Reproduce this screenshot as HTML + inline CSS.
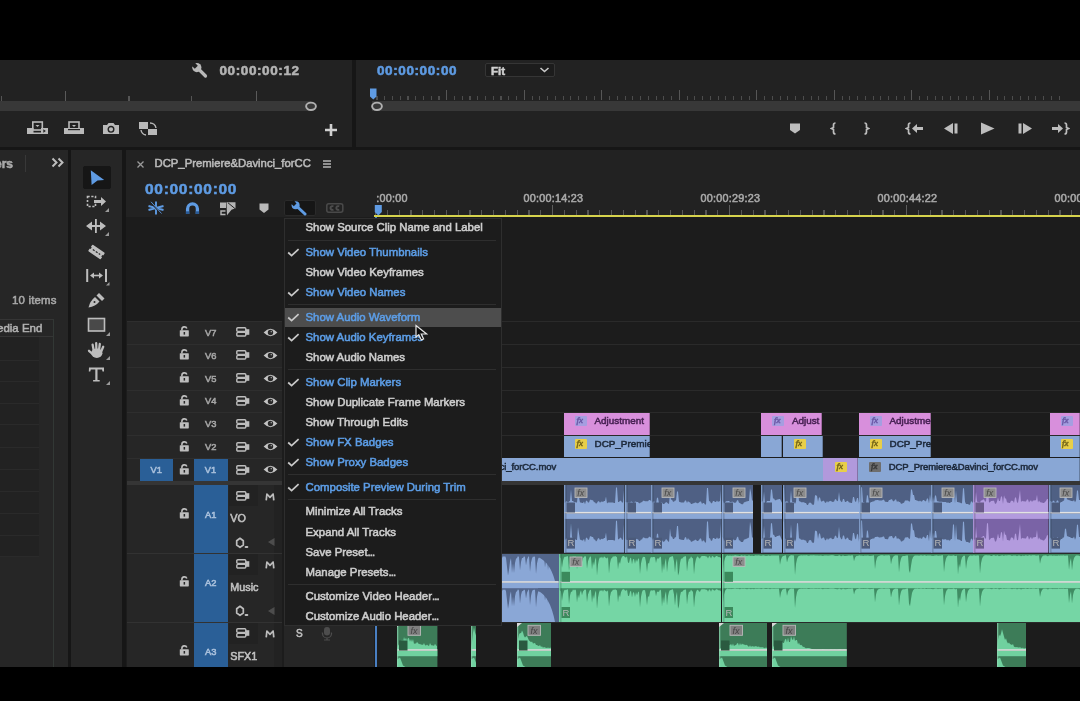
<!DOCTYPE html>
<html><head><meta charset="utf-8"><style>
html,body{margin:0;padding:0;}
body{width:1080px;height:701px;background:#000;position:relative;overflow:hidden;font-family:"Liberation Sans",sans-serif;}
body div, body span, body svg{position:absolute;}
.t{white-space:nowrap;-webkit-text-stroke:0.55px currentColor;}
.t span{position:static;}
svg text{font-family:"Liberation Sans",sans-serif;}
</style></head><body>
<svg width="0" height="0" style="left:0;top:0"><filter id="soft" x="0" y="0" width="100%" height="100%"><feGaussianBlur stdDeviation="0.5"/></filter></svg>
<div id="wrap" style="left:0;top:0;width:1080px;height:701px;filter:url(#soft)">
<div style="left:0px;top:60px;width:1080px;height:90px;background:#232323;"></div>
<div style="left:352.3px;top:60px;width:3.4px;height:90px;background:#171717;"></div>
<div style="left:0px;top:146.8px;width:1080px;height:3.6px;background:#171717;"></div>
<svg style="left:191px;top:62px;" width="17" height="17" viewBox="0 0 17 17"><path d="M7.5 7 L14.5 14" stroke="#b9b9b9" stroke-width="3.2" stroke-linecap="round"/><circle cx="5.8" cy="5.6" r="4.6" fill="#b9b9b9"/><path d="M0 3.2 L3.2 0 L6.8 3.8 L3.8 6.8z" fill="#232323"/></svg>
<span class="t" style="left:219.5px;top:64.17px;font-size:13.5px;line-height:13.5px;color:#b4b4b4;font-weight:700;letter-spacing:0.6px">00:00:00:12</span>
<div style="left:1.0px;top:96px;width:1.2px;height:5px;background:#555;"></div>
<div style="left:65.2px;top:91px;width:1.2px;height:10px;background:#5a5a5a;"></div>
<div style="left:128.4px;top:96px;width:1.2px;height:5px;background:#555;"></div>
<div style="left:191.0px;top:96px;width:1.2px;height:5px;background:#555;"></div>
<div style="left:255.5px;top:91px;width:1.2px;height:10px;background:#5a5a5a;"></div>
<div style="left:0px;top:101px;width:311px;height:10px;background:#393939;"></div>
<svg style="left:304px;top:99px;" width="14" height="14" viewBox="0 0 14 14"><ellipse cx="7" cy="7.3" rx="4.9" ry="3.7" fill="#393939" stroke="#b0b0b0" stroke-width="1.9"/></svg>
<svg style="left:26px;top:121px;" width="23" height="14" viewBox="0 0 23 14"><rect x="6.8" y="1" width="9.5" height="8" fill="none" stroke="#b9b9b9" stroke-width="1.6"/><path d="M9.5 4 h4 l-2 2z" fill="#b9b9b9"/><rect x="1" y="7" width="6.5" height="6" fill="#b9b9b9"/><rect x="6" y="11.5" width="9" height="1.5" fill="#b9b9b9"/><rect x="15" y="7" width="7" height="6" fill="#b9b9b9"/><path d="M17.3 8.3 v3.5 l2.6 -1.75z" fill="#232323"/></svg>
<svg style="left:63px;top:121px;" width="22" height="14" viewBox="0 0 22 14"><rect x="6" y="1" width="10" height="8" fill="none" stroke="#b9b9b9" stroke-width="1.6"/><path d="M9 4 h4 l-2 2z" fill="#b9b9b9"/><rect x="1" y="7" width="20" height="6" fill="#b9b9b9"/><rect x="5" y="8" width="12" height="1.2" fill="#232323"/></svg>
<svg style="left:102px;top:122px;" width="18" height="13" viewBox="0 0 18 13"><path d="M1 3 h4 l1.5 -2 h5 l1.5 2 h4 v9 h-16z" fill="#b9b9b9"/><circle cx="9" cy="7.3" r="2.8" fill="none" stroke="#232323" stroke-width="1.4"/></svg>
<svg style="left:138px;top:121px;" width="20" height="16" viewBox="0 0 20 16"><rect x="1" y="1" width="9" height="7" fill="#b9b9b9"/><rect x="10" y="8" width="9" height="6" fill="#b9b9b9"/><path d="M12 2 a6 6 0 0 1 6 5" fill="none" stroke="#b9b9b9" stroke-width="1.4"/><path d="M8 14 a6 6 0 0 1 -5 -5" fill="none" stroke="#b9b9b9" stroke-width="1.4"/><rect x="1" y="8" width="9" height="6" fill="none" stroke="#b9b9b9" stroke-width="0" /></svg>
<svg style="left:324px;top:123px;" width="14" height="14" viewBox="0 0 14 14"><path d="M7 1 v12 M1 7 h12" stroke="#d0d0d0" stroke-width="2.6"/></svg>
<span class="t" style="left:377px;top:64.17px;font-size:13.5px;line-height:13.5px;color:#5e9be3;font-weight:700;letter-spacing:0.6px">00:00:00:00</span>
<div style="left:485px;top:62.5px;width:70px;height:14.5px;background:#1b1b1b;border:1px solid #343434;box-sizing:border-box;border-radius:2px"></div>
<span class="t" style="left:491px;top:65.77px;font-size:11.5px;line-height:11.5px;color:#cfcfcf;font-weight:700;">Fit</span>
<svg style="left:539px;top:66px;" width="11" height="8" viewBox="0 0 11 8"><path d="M1.5 2 L5.5 5.5 L9.5 2" fill="none" stroke="#c8c8c8" stroke-width="1.6"/></svg>
<div style="left:376.4px;top:95.5px;width:1.2px;height:4.5px;background:#4e4e4e;"></div>
<div style="left:384.2px;top:95.5px;width:1.2px;height:4.5px;background:#4e4e4e;"></div>
<div style="left:391.9px;top:95.5px;width:1.2px;height:4.5px;background:#4e4e4e;"></div>
<div style="left:399.7px;top:95.5px;width:1.2px;height:4.5px;background:#4e4e4e;"></div>
<div style="left:407.4px;top:95.5px;width:1.2px;height:4.5px;background:#4e4e4e;"></div>
<div style="left:415.2px;top:95.5px;width:1.2px;height:4.5px;background:#4e4e4e;"></div>
<div style="left:422.9px;top:95.5px;width:1.2px;height:4.5px;background:#4e4e4e;"></div>
<div style="left:430.7px;top:95.5px;width:1.2px;height:4.5px;background:#4e4e4e;"></div>
<div style="left:438.4px;top:95.5px;width:1.2px;height:4.5px;background:#4e4e4e;"></div>
<div style="left:446.2px;top:90px;width:1.2px;height:10px;background:#565656;"></div>
<div style="left:453.9px;top:95.5px;width:1.2px;height:4.5px;background:#4e4e4e;"></div>
<div style="left:461.7px;top:95.5px;width:1.2px;height:4.5px;background:#4e4e4e;"></div>
<div style="left:469.4px;top:95.5px;width:1.2px;height:4.5px;background:#4e4e4e;"></div>
<div style="left:477.2px;top:95.5px;width:1.2px;height:4.5px;background:#4e4e4e;"></div>
<div style="left:484.9px;top:95.5px;width:1.2px;height:4.5px;background:#4e4e4e;"></div>
<div style="left:492.7px;top:95.5px;width:1.2px;height:4.5px;background:#4e4e4e;"></div>
<div style="left:500.4px;top:95.5px;width:1.2px;height:4.5px;background:#4e4e4e;"></div>
<div style="left:508.2px;top:95.5px;width:1.2px;height:4.5px;background:#4e4e4e;"></div>
<div style="left:516.0px;top:95.5px;width:1.2px;height:4.5px;background:#4e4e4e;"></div>
<div style="left:523.7px;top:90px;width:1.2px;height:10px;background:#565656;"></div>
<div style="left:531.5px;top:95.5px;width:1.2px;height:4.5px;background:#4e4e4e;"></div>
<div style="left:539.2px;top:95.5px;width:1.2px;height:4.5px;background:#4e4e4e;"></div>
<div style="left:547.0px;top:95.5px;width:1.2px;height:4.5px;background:#4e4e4e;"></div>
<div style="left:554.7px;top:95.5px;width:1.2px;height:4.5px;background:#4e4e4e;"></div>
<div style="left:562.5px;top:95.5px;width:1.2px;height:4.5px;background:#4e4e4e;"></div>
<div style="left:570.2px;top:95.5px;width:1.2px;height:4.5px;background:#4e4e4e;"></div>
<div style="left:578.0px;top:95.5px;width:1.2px;height:4.5px;background:#4e4e4e;"></div>
<div style="left:585.7px;top:95.5px;width:1.2px;height:4.5px;background:#4e4e4e;"></div>
<div style="left:593.5px;top:95.5px;width:1.2px;height:4.5px;background:#4e4e4e;"></div>
<div style="left:601.2px;top:90px;width:1.2px;height:10px;background:#565656;"></div>
<div style="left:609.0px;top:95.5px;width:1.2px;height:4.5px;background:#4e4e4e;"></div>
<div style="left:616.7px;top:95.5px;width:1.2px;height:4.5px;background:#4e4e4e;"></div>
<div style="left:624.5px;top:95.5px;width:1.2px;height:4.5px;background:#4e4e4e;"></div>
<div style="left:632.2px;top:95.5px;width:1.2px;height:4.5px;background:#4e4e4e;"></div>
<div style="left:640.0px;top:95.5px;width:1.2px;height:4.5px;background:#4e4e4e;"></div>
<div style="left:647.7px;top:95.5px;width:1.2px;height:4.5px;background:#4e4e4e;"></div>
<div style="left:655.5px;top:95.5px;width:1.2px;height:4.5px;background:#4e4e4e;"></div>
<div style="left:663.2px;top:95.5px;width:1.2px;height:4.5px;background:#4e4e4e;"></div>
<div style="left:671.0px;top:95.5px;width:1.2px;height:4.5px;background:#4e4e4e;"></div>
<div style="left:678.7px;top:90px;width:1.2px;height:10px;background:#565656;"></div>
<div style="left:686.5px;top:95.5px;width:1.2px;height:4.5px;background:#4e4e4e;"></div>
<div style="left:694.2px;top:95.5px;width:1.2px;height:4.5px;background:#4e4e4e;"></div>
<div style="left:702.0px;top:95.5px;width:1.2px;height:4.5px;background:#4e4e4e;"></div>
<div style="left:709.7px;top:95.5px;width:1.2px;height:4.5px;background:#4e4e4e;"></div>
<div style="left:717.5px;top:95.5px;width:1.2px;height:4.5px;background:#4e4e4e;"></div>
<div style="left:725.2px;top:95.5px;width:1.2px;height:4.5px;background:#4e4e4e;"></div>
<div style="left:733.0px;top:95.5px;width:1.2px;height:4.5px;background:#4e4e4e;"></div>
<div style="left:740.7px;top:95.5px;width:1.2px;height:4.5px;background:#4e4e4e;"></div>
<div style="left:748.5px;top:95.5px;width:1.2px;height:4.5px;background:#4e4e4e;"></div>
<div style="left:756.2px;top:90px;width:1.2px;height:10px;background:#565656;"></div>
<div style="left:764.0px;top:95.5px;width:1.2px;height:4.5px;background:#4e4e4e;"></div>
<div style="left:771.7px;top:95.5px;width:1.2px;height:4.5px;background:#4e4e4e;"></div>
<div style="left:779.5px;top:95.5px;width:1.2px;height:4.5px;background:#4e4e4e;"></div>
<div style="left:787.2px;top:95.5px;width:1.2px;height:4.5px;background:#4e4e4e;"></div>
<div style="left:795.0px;top:95.5px;width:1.2px;height:4.5px;background:#4e4e4e;"></div>
<div style="left:802.7px;top:95.5px;width:1.2px;height:4.5px;background:#4e4e4e;"></div>
<div style="left:810.5px;top:95.5px;width:1.2px;height:4.5px;background:#4e4e4e;"></div>
<div style="left:818.2px;top:95.5px;width:1.2px;height:4.5px;background:#4e4e4e;"></div>
<div style="left:826.0px;top:95.5px;width:1.2px;height:4.5px;background:#4e4e4e;"></div>
<div style="left:833.7px;top:90px;width:1.2px;height:10px;background:#565656;"></div>
<div style="left:841.5px;top:95.5px;width:1.2px;height:4.5px;background:#4e4e4e;"></div>
<div style="left:849.2px;top:95.5px;width:1.2px;height:4.5px;background:#4e4e4e;"></div>
<div style="left:857.0px;top:95.5px;width:1.2px;height:4.5px;background:#4e4e4e;"></div>
<div style="left:864.7px;top:95.5px;width:1.2px;height:4.5px;background:#4e4e4e;"></div>
<div style="left:872.5px;top:95.5px;width:1.2px;height:4.5px;background:#4e4e4e;"></div>
<div style="left:880.2px;top:95.5px;width:1.2px;height:4.5px;background:#4e4e4e;"></div>
<div style="left:888.0px;top:95.5px;width:1.2px;height:4.5px;background:#4e4e4e;"></div>
<div style="left:895.7px;top:95.5px;width:1.2px;height:4.5px;background:#4e4e4e;"></div>
<div style="left:903.5px;top:95.5px;width:1.2px;height:4.5px;background:#4e4e4e;"></div>
<div style="left:911.2px;top:90px;width:1.2px;height:10px;background:#565656;"></div>
<div style="left:919.0px;top:95.5px;width:1.2px;height:4.5px;background:#4e4e4e;"></div>
<div style="left:926.7px;top:95.5px;width:1.2px;height:4.5px;background:#4e4e4e;"></div>
<div style="left:934.5px;top:95.5px;width:1.2px;height:4.5px;background:#4e4e4e;"></div>
<div style="left:942.2px;top:95.5px;width:1.2px;height:4.5px;background:#4e4e4e;"></div>
<div style="left:950.0px;top:95.5px;width:1.2px;height:4.5px;background:#4e4e4e;"></div>
<div style="left:957.7px;top:95.5px;width:1.2px;height:4.5px;background:#4e4e4e;"></div>
<div style="left:965.5px;top:95.5px;width:1.2px;height:4.5px;background:#4e4e4e;"></div>
<div style="left:973.2px;top:95.5px;width:1.2px;height:4.5px;background:#4e4e4e;"></div>
<div style="left:981.0px;top:95.5px;width:1.2px;height:4.5px;background:#4e4e4e;"></div>
<div style="left:988.7px;top:90px;width:1.2px;height:10px;background:#565656;"></div>
<div style="left:996.5px;top:95.5px;width:1.2px;height:4.5px;background:#4e4e4e;"></div>
<div style="left:1004.2px;top:95.5px;width:1.2px;height:4.5px;background:#4e4e4e;"></div>
<div style="left:1012.0px;top:95.5px;width:1.2px;height:4.5px;background:#4e4e4e;"></div>
<div style="left:1019.7px;top:95.5px;width:1.2px;height:4.5px;background:#4e4e4e;"></div>
<div style="left:1027.5px;top:95.5px;width:1.2px;height:4.5px;background:#4e4e4e;"></div>
<div style="left:1035.2px;top:95.5px;width:1.2px;height:4.5px;background:#4e4e4e;"></div>
<div style="left:1043.0px;top:95.5px;width:1.2px;height:4.5px;background:#4e4e4e;"></div>
<div style="left:1050.7px;top:95.5px;width:1.2px;height:4.5px;background:#4e4e4e;"></div>
<div style="left:1058.5px;top:95.5px;width:1.2px;height:4.5px;background:#4e4e4e;"></div>
<div style="left:372px;top:101px;width:708px;height:10px;background:#393939;"></div>
<svg style="left:370px;top:99px;" width="14" height="14" viewBox="0 0 14 14"><ellipse cx="7" cy="7.3" rx="4.9" ry="3.7" fill="#393939" stroke="#b0b0b0" stroke-width="1.9"/></svg>
<svg style="left:369px;top:87px;" width="9" height="13" viewBox="0 0 9 13"><path d="M1 1.5 h6.5 v8 l-3.2 3 l-3.3 -3z" fill="#5e9be3"/></svg>
<svg style="left:789px;top:123px;" width="12" height="11" viewBox="0 0 12 11"><path d="M1 0.5 h10 v6.5 l-5 3.5 l-5 -3.5z" fill="#bdbdbd"/></svg>
<svg style="left:830px;top:122px;" width="7" height="13" viewBox="0 0 7 13"><path d="M5.5 1 q-2 0 -2 2 v2.5 l-2 1 l2 1 v2.5 q0 2 2 2" fill="none" stroke="#bdbdbd" stroke-width="1.7"/></svg>
<svg style="left:863px;top:122px;" width="7" height="13" viewBox="0 0 7 13"><path d="M1.5 1 q2 0 2 2 v2.5 l2 1 l-2 1 v2.5 q0 2 -2 2" fill="none" stroke="#bdbdbd" stroke-width="1.7"/></svg>
<svg style="left:905px;top:122px;" width="19" height="13" viewBox="0 0 19 13"><path d="M5.5 1 q-2 0 -2 2 v2.5 l-2 1 l2 1 v2.5 q0 2 2 2" fill="none" stroke="#bdbdbd" stroke-width="1.7"/><path d="M7 6.5 l5 -4.5 v3 h6 v3 h-6 v3z" fill="#bdbdbd"/></svg>
<svg style="left:943px;top:122px;" width="16" height="13" viewBox="0 0 16 13"><path d="M1 6.5 l9 -5.5 v11z" fill="#bdbdbd"/><rect x="11.5" y="1.5" width="3" height="10" fill="#bdbdbd"/></svg>
<svg style="left:980px;top:122px;" width="15" height="13" viewBox="0 0 15 13"><path d="M1 0.5 l13.5 6 l-13.5 6z" fill="#bdbdbd"/></svg>
<svg style="left:1017px;top:122px;" width="16" height="13" viewBox="0 0 16 13"><rect x="1.5" y="1.5" width="3" height="10" fill="#bdbdbd"/><path d="M6 1 l9 5.5 l-9 5.5z" fill="#bdbdbd"/></svg>
<svg style="left:1051px;top:122px;" width="19" height="13" viewBox="0 0 19 13"><path d="M13.5 1 q2 0 2 2 v2.5 l2 1 l-2 1 v2.5 q0 2 -2 2" fill="none" stroke="#bdbdbd" stroke-width="1.7"/><path d="M12 6.5 l-5 -4.5 v3 h-6 v3 h6 v3z" fill="#bdbdbd"/></svg>
<div style="left:0px;top:150px;width:1080px;height:517px;background:#232323;"></div>
<div style="left:0px;top:150px;width:68px;height:517px;background:#252525;"></div>
<div style="left:71px;top:150px;width:51px;height:517px;background:#262626;"></div>
<div style="left:68px;top:150px;width:3px;height:517px;background:#131313;"></div>
<div style="left:122px;top:150px;width:4px;height:517px;background:#131313;"></div>
<span class="t" style="left:-5px;top:158.34px;font-size:12px;line-height:12px;color:#a9a9a9;font-weight:700;">ers</span>
<div style="left:25px;top:154.5px;width:1px;height:17.5px;background:#383838;"></div>
<svg style="left:51px;top:157px;" width="14" height="11" viewBox="0 0 14 11"><path d="M1.5 1.5 L5.5 5.5 L1.5 9.5 M7.5 1.5 L11.5 5.5 L7.5 9.5" fill="none" stroke="#bdbdbd" stroke-width="2"/></svg>
<span class="t" style="left:12px;top:295.15px;font-size:11.4px;line-height:11.4px;color:#a8a8a8;font-weight:400;letter-spacing:0.2px">10 items</span>
<div style="left:0px;top:319px;width:54px;height:18px;background:#262626;border-top:1px solid #353535;border-right:1px solid #353535;border-bottom:1px solid #353535;box-sizing:border-box"></div>
<span class="t" style="left:-3px;top:323.27px;font-size:11.5px;line-height:11.5px;color:#b0b0b0;font-weight:400;">edia End</span>
<div style="left:0px;top:337px;width:39px;height:219.5px;background:#222222;"></div>
<div style="left:39px;top:337px;width:14px;height:330px;background:#282828;"></div>
<div style="left:53px;top:319px;width:1.2px;height:348px;background:#333835;"></div>
<div style="left:0px;top:360px;width:39px;height:1px;background:#2b2b2b;"></div>
<div style="left:0px;top:381px;width:39px;height:1px;background:#2b2b2b;"></div>
<div style="left:0px;top:403px;width:39px;height:1px;background:#2b2b2b;"></div>
<div style="left:0px;top:424px;width:39px;height:1px;background:#2b2b2b;"></div>
<div style="left:0px;top:447px;width:39px;height:1px;background:#2b2b2b;"></div>
<div style="left:0px;top:469px;width:39px;height:1px;background:#2b2b2b;"></div>
<div style="left:0px;top:491px;width:39px;height:1px;background:#2b2b2b;"></div>
<div style="left:0px;top:513px;width:39px;height:1px;background:#2b2b2b;"></div>
<div style="left:0px;top:535px;width:39px;height:1px;background:#2b2b2b;"></div>
<div style="left:0px;top:556px;width:39px;height:1px;background:#2b2b2b;"></div>
<div style="left:83px;top:166px;width:28px;height:23px;background:#161616;border-radius:2px"></div>
<svg style="left:88px;top:168px;" width="20" height="20" viewBox="0 0 20 20"><path d="M2.8 2.2 L16.2 12 L9.5 12.5 L3.6 17z" fill="#5e9be3"/></svg>
<svg style="left:86px;top:194px;" width="24" height="19" viewBox="0 0 24 19"><rect x="1.5" y="2.5" width="8" height="10" fill="none" stroke="#bdbdbd" stroke-width="1.6" stroke-dasharray="2.2 1.6"/><path d="M8 6 h7 v-3 l5 4.5 l-5 4.5 v-3 h-7z" fill="#bdbdbd"/><path d="M23 14 v4 h-4z" fill="#9a9a9a"/></svg>
<svg style="left:85px;top:218px;" width="25" height="20" viewBox="0 0 25 20"><rect x="10" y="1" width="1.8" height="14" fill="#bdbdbd"/><path d="M1 8 l6 -4.5 v9z M21 8 l-6 -4.5 v9z" fill="#bdbdbd"/><rect x="6" y="7" width="10" height="2" fill="#bdbdbd"/><path d="M24 14 v4 h-4z" fill="#9a9a9a"/></svg>
<svg style="left:87px;top:243px;" width="20" height="18" viewBox="0 0 20 18"><g transform="rotate(35 9.5 9)"><rect x="2" y="5" width="15" height="8" rx="0.8" fill="#bdbdbd"/><rect x="1" y="8" width="2" height="2" fill="#262626"/><rect x="16" y="8" width="2" height="2" fill="#262626"/><path d="M5 9 h9" stroke="#262626" stroke-width="1.2" stroke-dasharray="2.2 1.4"/></g></svg>
<svg style="left:85px;top:268px;" width="25" height="18" viewBox="0 0 25 18"><rect x="1.2" y="1" width="2" height="13" fill="#bdbdbd"/><rect x="20" y="1" width="2" height="13" fill="#bdbdbd"/><path d="M5 7.5 l4 -3 v6z M18 7.5 l-4 -3 v6z" fill="#bdbdbd"/><rect x="8" y="6.7" width="7" height="1.6" fill="#bdbdbd"/><path d="M24.5 14 v3.5 h-3.5z" fill="#9a9a9a"/></svg>
<svg style="left:87px;top:292px;" width="19" height="17" viewBox="0 0 19 17"><path d="M1.5 15.5 Q3 9 8 5 L12.5 9.5 Q8.5 14.5 1.5 15.5z" fill="#bdbdbd"/><path d="M9.5 3.5 L12 1 L17.5 6.5 L15 9z" fill="#bdbdbd"/><circle cx="7.5" cy="10" r="1" fill="#262626"/></svg>
<svg style="left:87px;top:317px;" width="24" height="20" viewBox="0 0 24 20"><rect x="1.5" y="1.5" width="16" height="12.5" fill="#4a4a4a" stroke="#bdbdbd" stroke-width="1.6"/><path d="M23 15 v4 h-4z" fill="#9a9a9a"/></svg>
<svg style="left:87px;top:341px;" width="24" height="20" viewBox="0 0 24 20"><ellipse cx="9.8" cy="12.2" rx="5.6" ry="4.8" fill="#bdbdbd"/><path d="M6.8 10 L5.6 3.6 M9.4 9 L9.2 2.2 M12 9.5 L12.8 3 M14 11 L16.2 5.8 M5.5 13 L2 9.8" stroke="#bdbdbd" stroke-width="2.3" stroke-linecap="round" fill="none"/><path d="M23 15 v4 h-4z" fill="#9a9a9a"/></svg>
<svg style="left:87px;top:366px;" width="24" height="20" viewBox="0 0 24 20"><path d="M2 1.5 h15 v4 h-1.5 l-0.5 -2 h-4.5 v10.5 h2.2 v1.5 h-6.6 v-1.5 h2.2 v-10.5 h-4.5 l-0.5 2 h-1.5z" fill="#bdbdbd"/><path d="M23 15 v4 h-4z" fill="#9a9a9a"/></svg>
<svg style="left:136px;top:160px;" width="9" height="9" viewBox="0 0 9 9"><path d="M1.5 1.5 L7.5 7.5 M7.5 1.5 L1.5 7.5" stroke="#9a9a9a" stroke-width="1.3"/></svg>
<span class="t" style="left:154.5px;top:158.03px;font-size:11.3px;line-height:11.3px;color:#bababa;font-weight:400;letter-spacing:0px">DCP_Premiere&amp;Davinci_forCC</span>
<svg style="left:322px;top:159px;" width="10" height="10" viewBox="0 0 10 10"><path d="M1 2 h8 M1 5 h8 M1 8 h8" stroke="#b5b5b5" stroke-width="1.5"/></svg>
<span class="t" style="left:145px;top:181.48px;font-size:15.5px;line-height:15.5px;color:#5e9be3;font-weight:700;letter-spacing:0.7px">00:00:00:00</span>
<svg style="left:147px;top:200px;" width="18" height="16" viewBox="0 0 18 16"><path d="M9 1.5 v13 M1.5 6 L16.5 10 M1.5 10 L16.5 6" stroke="#5e9be3" stroke-width="1.9"/><path d="M3 1.5 L15 14.5" stroke="#232323" stroke-width="1.6"/><path d="M4 1.8 L14.5 13.5" stroke="#5e9be3" stroke-width="0.9"/></svg>
<svg style="left:184.5px;top:202px;" width="15" height="12" viewBox="0 0 15 12"><path d="M2.6 12 v-5.2 a4.9 4.9 0 0 1 9.8 0 v5.2" fill="none" stroke="#5e9be3" stroke-width="3.3"/><rect x="0.9" y="9.3" width="3.4" height="2.7" fill="#2a5a95"/><rect x="10.7" y="9.3" width="3.4" height="2.7" fill="#2a5a95"/></svg>
<svg style="left:219px;top:201px;" width="18" height="15" viewBox="0 0 18 15"><rect x="1" y="1.5" width="6" height="5.5" fill="#b5b5b5"/><path d="M6.5 10 h-4.5 v3.5 h4.5" fill="none" stroke="#b5b5b5" stroke-width="1.4"/><path d="M7.5 1.2 h9 v6 l-4 1.5 l-4.5 5.5z" fill="#b5b5b5"/><path d="M9 1.8 L16 7.6" stroke="#232323" stroke-width="1"/></svg>
<svg style="left:258px;top:202px;" width="12" height="12" viewBox="0 0 12 12"><path d="M1.5 1.5 h9 v6 l-4.5 3.5 l-4.5 -3.5z" fill="#b9b9b9"/></svg>
<div style="left:283.5px;top:199.7px;width:32.5px;height:16.2px;background:#161616;border:1px solid #2a2a2a;box-sizing:border-box;border-radius:2px"></div>
<svg style="left:290px;top:200px;" width="18" height="16" viewBox="0 0 18 16"><path d="M6.5 6 L15 14" stroke="#5e9be3" stroke-width="3" stroke-linecap="round"/><circle cx="5.6" cy="5.2" r="4" fill="#5e9be3"/><path d="M0.5 3 L3.5 0 L6.5 3.6 L3.8 6.3z" fill="#161616"/></svg>
<svg style="left:326.3px;top:203.2px;" width="18" height="10" viewBox="0 0 18 10"><rect x="0.8" y="0.8" width="16" height="8.4" rx="2" fill="none" stroke="#4a4a4a" stroke-width="1.5"/><path d="M7.4 3.3 a2 1.9 0 1 0 0 3.4 M13.2 3.3 a2 1.9 0 1 0 0 3.4" fill="none" stroke="#4d4d4d" stroke-width="1.9"/></svg>
<div style="left:374px;top:150px;width:706px;height:67px;overflow:hidden">
<span class="t" style="left:-26.1px;top:42.86px;font-size:10.8px;line-height:10.8px;color:#a9a9a9;letter-spacing:0.25px">00:00:00:00</span>
<span class="t" style="left:149.5px;top:42.86px;font-size:10.8px;line-height:10.8px;color:#a9a9a9;letter-spacing:0.25px">00:00:14:23</span>
<span class="t" style="left:326.5px;top:42.86px;font-size:10.8px;line-height:10.8px;color:#a9a9a9;letter-spacing:0.25px">00:00:29:23</span>
<span class="t" style="left:503.5px;top:42.86px;font-size:10.8px;line-height:10.8px;color:#a9a9a9;letter-spacing:0.25px">00:00:44:22</span>
<span class="t" style="left:680.5px;top:42.86px;font-size:10.8px;line-height:10.8px;color:#a9a9a9;letter-spacing:0.25px">00:00:59:22</span>
<div style="left:1.0px;top:55px;width:1.2px;height:10px;background:#5c5c5c"></div>
<div style="left:12.8px;top:60px;width:1.2px;height:4.5px;background:#565656"></div>
<div style="left:24.6px;top:60px;width:1.2px;height:4.5px;background:#565656"></div>
<div style="left:36.4px;top:60px;width:1.2px;height:4.5px;background:#565656"></div>
<div style="left:48.2px;top:60px;width:1.2px;height:4.5px;background:#565656"></div>
<div style="left:60.0px;top:60px;width:1.2px;height:4.5px;background:#565656"></div>
<div style="left:71.8px;top:60px;width:1.2px;height:4.5px;background:#565656"></div>
<div style="left:83.6px;top:60px;width:1.2px;height:4.5px;background:#565656"></div>
<div style="left:95.4px;top:60px;width:1.2px;height:4.5px;background:#565656"></div>
<div style="left:107.2px;top:60px;width:1.2px;height:4.5px;background:#565656"></div>
<div style="left:119.0px;top:60px;width:1.2px;height:4.5px;background:#565656"></div>
<div style="left:130.8px;top:60px;width:1.2px;height:4.5px;background:#565656"></div>
<div style="left:142.6px;top:60px;width:1.2px;height:4.5px;background:#565656"></div>
<div style="left:154.4px;top:60px;width:1.2px;height:4.5px;background:#565656"></div>
<div style="left:166.2px;top:60px;width:1.2px;height:4.5px;background:#565656"></div>
<div style="left:178.0px;top:55px;width:1.2px;height:10px;background:#5c5c5c"></div>
<div style="left:189.8px;top:60px;width:1.2px;height:4.5px;background:#565656"></div>
<div style="left:201.6px;top:60px;width:1.2px;height:4.5px;background:#565656"></div>
<div style="left:213.4px;top:60px;width:1.2px;height:4.5px;background:#565656"></div>
<div style="left:225.2px;top:60px;width:1.2px;height:4.5px;background:#565656"></div>
<div style="left:237.0px;top:60px;width:1.2px;height:4.5px;background:#565656"></div>
<div style="left:248.8px;top:60px;width:1.2px;height:4.5px;background:#565656"></div>
<div style="left:260.6px;top:60px;width:1.2px;height:4.5px;background:#565656"></div>
<div style="left:272.4px;top:60px;width:1.2px;height:4.5px;background:#565656"></div>
<div style="left:284.2px;top:60px;width:1.2px;height:4.5px;background:#565656"></div>
<div style="left:296.0px;top:60px;width:1.2px;height:4.5px;background:#565656"></div>
<div style="left:307.8px;top:60px;width:1.2px;height:4.5px;background:#565656"></div>
<div style="left:319.6px;top:60px;width:1.2px;height:4.5px;background:#565656"></div>
<div style="left:331.4px;top:60px;width:1.2px;height:4.5px;background:#565656"></div>
<div style="left:343.2px;top:60px;width:1.2px;height:4.5px;background:#565656"></div>
<div style="left:355.0px;top:55px;width:1.2px;height:10px;background:#5c5c5c"></div>
<div style="left:366.8px;top:60px;width:1.2px;height:4.5px;background:#565656"></div>
<div style="left:378.6px;top:60px;width:1.2px;height:4.5px;background:#565656"></div>
<div style="left:390.4px;top:60px;width:1.2px;height:4.5px;background:#565656"></div>
<div style="left:402.2px;top:60px;width:1.2px;height:4.5px;background:#565656"></div>
<div style="left:414.0px;top:60px;width:1.2px;height:4.5px;background:#565656"></div>
<div style="left:425.8px;top:60px;width:1.2px;height:4.5px;background:#565656"></div>
<div style="left:437.6px;top:60px;width:1.2px;height:4.5px;background:#565656"></div>
<div style="left:449.4px;top:60px;width:1.2px;height:4.5px;background:#565656"></div>
<div style="left:461.2px;top:60px;width:1.2px;height:4.5px;background:#565656"></div>
<div style="left:473.0px;top:60px;width:1.2px;height:4.5px;background:#565656"></div>
<div style="left:484.8px;top:60px;width:1.2px;height:4.5px;background:#565656"></div>
<div style="left:496.6px;top:60px;width:1.2px;height:4.5px;background:#565656"></div>
<div style="left:508.4px;top:60px;width:1.2px;height:4.5px;background:#565656"></div>
<div style="left:520.2px;top:60px;width:1.2px;height:4.5px;background:#565656"></div>
<div style="left:532.0px;top:55px;width:1.2px;height:10px;background:#5c5c5c"></div>
<div style="left:543.8px;top:60px;width:1.2px;height:4.5px;background:#565656"></div>
<div style="left:555.6px;top:60px;width:1.2px;height:4.5px;background:#565656"></div>
<div style="left:567.4px;top:60px;width:1.2px;height:4.5px;background:#565656"></div>
<div style="left:579.2px;top:60px;width:1.2px;height:4.5px;background:#565656"></div>
<div style="left:591.0px;top:60px;width:1.2px;height:4.5px;background:#565656"></div>
<div style="left:602.8px;top:60px;width:1.2px;height:4.5px;background:#565656"></div>
<div style="left:614.6px;top:60px;width:1.2px;height:4.5px;background:#565656"></div>
<div style="left:626.4px;top:60px;width:1.2px;height:4.5px;background:#565656"></div>
<div style="left:638.2px;top:60px;width:1.2px;height:4.5px;background:#565656"></div>
<div style="left:650.0px;top:60px;width:1.2px;height:4.5px;background:#565656"></div>
<div style="left:661.8px;top:60px;width:1.2px;height:4.5px;background:#565656"></div>
<div style="left:673.6px;top:60px;width:1.2px;height:4.5px;background:#565656"></div>
<div style="left:685.4px;top:60px;width:1.2px;height:4.5px;background:#565656"></div>
<div style="left:697.2px;top:60px;width:1.2px;height:4.5px;background:#565656"></div>
<div style="left:709.0px;top:55px;width:1.2px;height:10px;background:#5c5c5c"></div>
<div style="left:720.8px;top:60px;width:1.2px;height:4.5px;background:#565656"></div>
<div style="left:732.6px;top:60px;width:1.2px;height:4.5px;background:#565656"></div>
<div style="left:744.4px;top:60px;width:1.2px;height:4.5px;background:#565656"></div>
<div style="left:0px;top:65px;width:706px;height:2.6px;background:#d6d34e"></div>
</div>
<div style="left:372px;top:190px;width:3.8px;height:13px;background:#232323;"></div>
<svg style="left:374px;top:204px;" width="9" height="12" viewBox="0 0 9 12"><path d="M0.8 1 h7 v7 l-3.5 3.5 l-3.5 -3.5z" fill="#5e9be3"/></svg>
<div style="left:126px;top:217px;width:954px;height:450px;background:#1f1f1f;"></div>
<div style="left:126.5px;top:320.5px;width:247.5px;height:160.5px;background:#272727;"></div>
<div style="left:126.5px;top:320.5px;width:247.5px;height:1px;background:#2e2e2e;"></div>
<div style="left:374px;top:320.5px;width:706px;height:1px;background:#2a2a2a;"></div>
<div style="left:126.5px;top:343.5px;width:247.5px;height:1px;background:#2e2e2e;"></div>
<div style="left:374px;top:343.5px;width:706px;height:1px;background:#2a2a2a;"></div>
<div style="left:126.5px;top:366.5px;width:247.5px;height:1px;background:#2e2e2e;"></div>
<div style="left:374px;top:366.5px;width:706px;height:1px;background:#2a2a2a;"></div>
<div style="left:126.5px;top:389.5px;width:247.5px;height:1px;background:#2e2e2e;"></div>
<div style="left:374px;top:389.5px;width:706px;height:1px;background:#2a2a2a;"></div>
<div style="left:126.5px;top:412px;width:247.5px;height:1px;background:#2e2e2e;"></div>
<div style="left:374px;top:412px;width:706px;height:1px;background:#2a2a2a;"></div>
<div style="left:126.5px;top:435px;width:247.5px;height:1px;background:#2e2e2e;"></div>
<div style="left:374px;top:435px;width:706px;height:1px;background:#2a2a2a;"></div>
<div style="left:126.5px;top:457.5px;width:247.5px;height:1px;background:#2e2e2e;"></div>
<div style="left:374px;top:457.5px;width:706px;height:1px;background:#2a2a2a;"></div>
<div style="left:126.5px;top:481px;width:247.5px;height:1px;background:#2e2e2e;"></div>
<div style="left:374px;top:481px;width:706px;height:1px;background:#2a2a2a;"></div>
<div style="left:126.5px;top:481px;width:953.5px;height:4px;background:#343434;"></div>
<div style="left:126.5px;top:485px;width:247.5px;height:182px;background:#272727;"></div>
<div style="left:126.5px;top:552.6px;width:247.5px;height:1px;background:#323232;"></div>
<div style="left:374px;top:552.6px;width:706px;height:1px;background:#2a2a2a;"></div>
<div style="left:126.5px;top:621.6px;width:247.5px;height:1px;background:#323232;"></div>
<div style="left:374px;top:621.6px;width:706px;height:1px;background:#2a2a2a;"></div>
<div style="left:282px;top:217px;width:2px;height:450px;background:#1c1c1c;"></div>
<span class="t" style="left:205px;top:328.63px;font-size:9.3px;line-height:9.3px;color:#a5a5a5;font-weight:400;">V7</span>
<svg style="left:178.5px;top:326.3px;" width="11" height="12" viewBox="0 0 11 12"><path d="M2.9 4.6 v-1.4 a2.5 2.4 0 0 1 4.9 -0.6" fill="none" stroke="#bdbdbd" stroke-width="1.6"/><rect x="0.8" y="4.2" width="9" height="6.2" rx="0.6" fill="#bdbdbd"/><rect x="4.6" y="6" width="1.5" height="2.6" fill="#272727"/></svg>
<svg style="left:235.8px;top:327.3px;" width="14" height="10" viewBox="0 0 14 10"><rect x="0.8" y="0.8" width="9" height="3.6" rx="1" fill="none" stroke="#bdbdbd" stroke-width="1.4"/><rect x="0.8" y="5.4" width="9" height="3.6" rx="1" fill="none" stroke="#bdbdbd" stroke-width="1.4"/><rect x="9.5" y="2.2" width="3.8" height="5.6" fill="#bdbdbd"/></svg>
<svg style="left:262.8px;top:327.8px;" width="15" height="9" viewBox="0 0 15 9"><path d="M0.6 4.5 Q7.5 -2.8 14.4 4.5 Q7.5 11.8 0.6 4.5z" fill="#c4c4c4"/><circle cx="7.5" cy="4.5" r="2.7" fill="#2a2a2a"/><circle cx="8.3" cy="3.6" r="0.8" fill="#9a9a9a"/></svg>
<span class="t" style="left:205px;top:351.63px;font-size:9.3px;line-height:9.3px;color:#a5a5a5;font-weight:400;">V6</span>
<svg style="left:178.5px;top:349.3px;" width="11" height="12" viewBox="0 0 11 12"><path d="M2.9 4.6 v-1.4 a2.5 2.4 0 0 1 4.9 -0.6" fill="none" stroke="#bdbdbd" stroke-width="1.6"/><rect x="0.8" y="4.2" width="9" height="6.2" rx="0.6" fill="#bdbdbd"/><rect x="4.6" y="6" width="1.5" height="2.6" fill="#272727"/></svg>
<svg style="left:235.8px;top:350.3px;" width="14" height="10" viewBox="0 0 14 10"><rect x="0.8" y="0.8" width="9" height="3.6" rx="1" fill="none" stroke="#bdbdbd" stroke-width="1.4"/><rect x="0.8" y="5.4" width="9" height="3.6" rx="1" fill="none" stroke="#bdbdbd" stroke-width="1.4"/><rect x="9.5" y="2.2" width="3.8" height="5.6" fill="#bdbdbd"/></svg>
<svg style="left:262.8px;top:350.8px;" width="15" height="9" viewBox="0 0 15 9"><path d="M0.6 4.5 Q7.5 -2.8 14.4 4.5 Q7.5 11.8 0.6 4.5z" fill="#c4c4c4"/><circle cx="7.5" cy="4.5" r="2.7" fill="#2a2a2a"/><circle cx="8.3" cy="3.6" r="0.8" fill="#9a9a9a"/></svg>
<span class="t" style="left:205px;top:374.63px;font-size:9.3px;line-height:9.3px;color:#a5a5a5;font-weight:400;">V5</span>
<svg style="left:178.5px;top:372.3px;" width="11" height="12" viewBox="0 0 11 12"><path d="M2.9 4.6 v-1.4 a2.5 2.4 0 0 1 4.9 -0.6" fill="none" stroke="#bdbdbd" stroke-width="1.6"/><rect x="0.8" y="4.2" width="9" height="6.2" rx="0.6" fill="#bdbdbd"/><rect x="4.6" y="6" width="1.5" height="2.6" fill="#272727"/></svg>
<svg style="left:235.8px;top:373.3px;" width="14" height="10" viewBox="0 0 14 10"><rect x="0.8" y="0.8" width="9" height="3.6" rx="1" fill="none" stroke="#bdbdbd" stroke-width="1.4"/><rect x="0.8" y="5.4" width="9" height="3.6" rx="1" fill="none" stroke="#bdbdbd" stroke-width="1.4"/><rect x="9.5" y="2.2" width="3.8" height="5.6" fill="#bdbdbd"/></svg>
<svg style="left:262.8px;top:373.8px;" width="15" height="9" viewBox="0 0 15 9"><path d="M0.6 4.5 Q7.5 -2.8 14.4 4.5 Q7.5 11.8 0.6 4.5z" fill="#c4c4c4"/><circle cx="7.5" cy="4.5" r="2.7" fill="#2a2a2a"/><circle cx="8.3" cy="3.6" r="0.8" fill="#9a9a9a"/></svg>
<span class="t" style="left:205px;top:397.38px;font-size:9.3px;line-height:9.3px;color:#a5a5a5;font-weight:400;">V4</span>
<svg style="left:178.5px;top:395.05px;" width="11" height="12" viewBox="0 0 11 12"><path d="M2.9 4.6 v-1.4 a2.5 2.4 0 0 1 4.9 -0.6" fill="none" stroke="#bdbdbd" stroke-width="1.6"/><rect x="0.8" y="4.2" width="9" height="6.2" rx="0.6" fill="#bdbdbd"/><rect x="4.6" y="6" width="1.5" height="2.6" fill="#272727"/></svg>
<svg style="left:235.8px;top:396.05px;" width="14" height="10" viewBox="0 0 14 10"><rect x="0.8" y="0.8" width="9" height="3.6" rx="1" fill="none" stroke="#bdbdbd" stroke-width="1.4"/><rect x="0.8" y="5.4" width="9" height="3.6" rx="1" fill="none" stroke="#bdbdbd" stroke-width="1.4"/><rect x="9.5" y="2.2" width="3.8" height="5.6" fill="#bdbdbd"/></svg>
<svg style="left:262.8px;top:396.55px;" width="15" height="9" viewBox="0 0 15 9"><path d="M0.6 4.5 Q7.5 -2.8 14.4 4.5 Q7.5 11.8 0.6 4.5z" fill="#c4c4c4"/><circle cx="7.5" cy="4.5" r="2.7" fill="#2a2a2a"/><circle cx="8.3" cy="3.6" r="0.8" fill="#9a9a9a"/></svg>
<span class="t" style="left:205px;top:420.13px;font-size:9.3px;line-height:9.3px;color:#a5a5a5;font-weight:400;">V3</span>
<svg style="left:178.5px;top:417.8px;" width="11" height="12" viewBox="0 0 11 12"><path d="M2.9 4.6 v-1.4 a2.5 2.4 0 0 1 4.9 -0.6" fill="none" stroke="#bdbdbd" stroke-width="1.6"/><rect x="0.8" y="4.2" width="9" height="6.2" rx="0.6" fill="#bdbdbd"/><rect x="4.6" y="6" width="1.5" height="2.6" fill="#272727"/></svg>
<svg style="left:235.8px;top:418.8px;" width="14" height="10" viewBox="0 0 14 10"><rect x="0.8" y="0.8" width="9" height="3.6" rx="1" fill="none" stroke="#bdbdbd" stroke-width="1.4"/><rect x="0.8" y="5.4" width="9" height="3.6" rx="1" fill="none" stroke="#bdbdbd" stroke-width="1.4"/><rect x="9.5" y="2.2" width="3.8" height="5.6" fill="#bdbdbd"/></svg>
<svg style="left:262.8px;top:419.3px;" width="15" height="9" viewBox="0 0 15 9"><path d="M0.6 4.5 Q7.5 -2.8 14.4 4.5 Q7.5 11.8 0.6 4.5z" fill="#c4c4c4"/><circle cx="7.5" cy="4.5" r="2.7" fill="#2a2a2a"/><circle cx="8.3" cy="3.6" r="0.8" fill="#9a9a9a"/></svg>
<span class="t" style="left:205px;top:442.88px;font-size:9.3px;line-height:9.3px;color:#a5a5a5;font-weight:400;">V2</span>
<svg style="left:178.5px;top:440.55px;" width="11" height="12" viewBox="0 0 11 12"><path d="M2.9 4.6 v-1.4 a2.5 2.4 0 0 1 4.9 -0.6" fill="none" stroke="#bdbdbd" stroke-width="1.6"/><rect x="0.8" y="4.2" width="9" height="6.2" rx="0.6" fill="#bdbdbd"/><rect x="4.6" y="6" width="1.5" height="2.6" fill="#272727"/></svg>
<svg style="left:235.8px;top:441.55px;" width="14" height="10" viewBox="0 0 14 10"><rect x="0.8" y="0.8" width="9" height="3.6" rx="1" fill="none" stroke="#bdbdbd" stroke-width="1.4"/><rect x="0.8" y="5.4" width="9" height="3.6" rx="1" fill="none" stroke="#bdbdbd" stroke-width="1.4"/><rect x="9.5" y="2.2" width="3.8" height="5.6" fill="#bdbdbd"/></svg>
<svg style="left:262.8px;top:442.05px;" width="15" height="9" viewBox="0 0 15 9"><path d="M0.6 4.5 Q7.5 -2.8 14.4 4.5 Q7.5 11.8 0.6 4.5z" fill="#c4c4c4"/><circle cx="7.5" cy="4.5" r="2.7" fill="#2a2a2a"/><circle cx="8.3" cy="3.6" r="0.8" fill="#9a9a9a"/></svg>
<div style="left:139.7px;top:458.5px;width:33.7px;height:22.5px;background:#2a5f97;"></div>
<span class="t" style="left:150.5px;top:465.88px;font-size:9.3px;line-height:9.3px;color:#a9c0dc;font-weight:400;">V1</span>
<div style="left:194.2px;top:458.5px;width:34px;height:22.5px;background:#2a5f97;"></div>
<span class="t" style="left:204.8px;top:465.88px;font-size:9.3px;line-height:9.3px;color:#a9c0dc;font-weight:400;">V1</span>
<svg style="left:178.5px;top:463.55px;" width="11" height="12" viewBox="0 0 11 12"><path d="M2.9 4.6 v-1.4 a2.5 2.4 0 0 1 4.9 -0.6" fill="none" stroke="#bdbdbd" stroke-width="1.6"/><rect x="0.8" y="4.2" width="9" height="6.2" rx="0.6" fill="#bdbdbd"/><rect x="4.6" y="6" width="1.5" height="2.6" fill="#272727"/></svg>
<svg style="left:235.8px;top:464.55px;" width="14" height="10" viewBox="0 0 14 10"><rect x="0.8" y="0.8" width="9" height="3.6" rx="1" fill="none" stroke="#bdbdbd" stroke-width="1.4"/><rect x="0.8" y="5.4" width="9" height="3.6" rx="1" fill="none" stroke="#bdbdbd" stroke-width="1.4"/><rect x="9.5" y="2.2" width="3.8" height="5.6" fill="#bdbdbd"/></svg>
<svg style="left:262.8px;top:465.05px;" width="15" height="9" viewBox="0 0 15 9"><path d="M0.6 4.5 Q7.5 -2.8 14.4 4.5 Q7.5 11.8 0.6 4.5z" fill="#c4c4c4"/><circle cx="7.5" cy="4.5" r="2.7" fill="#2a2a2a"/><circle cx="8.3" cy="3.6" r="0.8" fill="#9a9a9a"/></svg>
<div style="left:194.2px;top:485px;width:34px;height:67.60000000000002px;background:#2a5f97;"></div>
<div style="left:228.6px;top:485px;width:29px;height:21px;background:#212121;"></div>
<div style="left:274.2px;top:485px;width:8px;height:67.60000000000002px;background:#242424;"></div>
<svg style="left:235.8px;top:490.5px;" width="14" height="10" viewBox="0 0 14 10"><rect x="0.8" y="0.8" width="9" height="3.6" rx="1" fill="none" stroke="#bdbdbd" stroke-width="1.4"/><rect x="0.8" y="5.4" width="9" height="3.6" rx="1" fill="none" stroke="#bdbdbd" stroke-width="1.4"/><rect x="9.5" y="2.2" width="3.8" height="5.6" fill="#bdbdbd"/></svg>
<svg style="left:265.4px;top:492.5px;" width="10" height="8" viewBox="0 0 10 8"><path d="M1.2 7.3 L1.9 1 L5 4.3 L8.1 1 L8.8 7.3" fill="none" stroke="#bdbdbd" stroke-width="1.7" stroke-linejoin="round"/></svg>
<span class="t" style="left:230.3px;top:513.26px;font-size:10.8px;line-height:10.8px;color:#c0c0c0;font-weight:400;">VO</span>
<svg style="left:178.5px;top:507.5px;" width="11" height="12" viewBox="0 0 11 12"><path d="M2.9 4.6 v-1.4 a2.5 2.4 0 0 1 4.9 -0.6" fill="none" stroke="#bdbdbd" stroke-width="1.6"/><rect x="0.8" y="4.2" width="9" height="6.2" rx="0.6" fill="#bdbdbd"/><rect x="4.6" y="6" width="1.5" height="2.6" fill="#272727"/></svg>
<span class="t" style="left:205px;top:510.73px;font-size:9.3px;line-height:9.3px;color:#a9c0dc;font-weight:400;">A1</span>
<svg style="left:235px;top:536.5px;" width="14" height="12" viewBox="0 0 14 12"><path d="M5 1.3 L8.3 3.8 L8.3 8 L5 10.4 L1.7 8 L1.7 3.8z" fill="none" stroke="#bdbdbd" stroke-width="1.7" stroke-linejoin="round"/><rect x="9.6" y="8.9" width="3.7" height="2" rx="1" fill="#bdbdbd"/></svg>
<svg style="left:267px;top:537px;" width="8" height="10" viewBox="0 0 8 10"><path d="M7.5 1 v8 l-6.5 -4z" fill="#4e4e4e"/></svg>
<div style="left:194.2px;top:553.6px;width:34px;height:68.0px;background:#2a5f97;"></div>
<div style="left:228.6px;top:553.6px;width:29px;height:21px;background:#212121;"></div>
<div style="left:274.2px;top:553.6px;width:8px;height:68.0px;background:#242424;"></div>
<svg style="left:235.8px;top:559.1px;" width="14" height="10" viewBox="0 0 14 10"><rect x="0.8" y="0.8" width="9" height="3.6" rx="1" fill="none" stroke="#bdbdbd" stroke-width="1.4"/><rect x="0.8" y="5.4" width="9" height="3.6" rx="1" fill="none" stroke="#bdbdbd" stroke-width="1.4"/><rect x="9.5" y="2.2" width="3.8" height="5.6" fill="#bdbdbd"/></svg>
<svg style="left:265.4px;top:561.1px;" width="10" height="8" viewBox="0 0 10 8"><path d="M1.2 7.3 L1.9 1 L5 4.3 L8.1 1 L8.8 7.3" fill="none" stroke="#bdbdbd" stroke-width="1.7" stroke-linejoin="round"/></svg>
<span class="t" style="left:230.3px;top:581.86px;font-size:10.8px;line-height:10.8px;color:#c0c0c0;font-weight:400;">Music</span>
<svg style="left:178.5px;top:576.1px;" width="11" height="12" viewBox="0 0 11 12"><path d="M2.9 4.6 v-1.4 a2.5 2.4 0 0 1 4.9 -0.6" fill="none" stroke="#bdbdbd" stroke-width="1.6"/><rect x="0.8" y="4.2" width="9" height="6.2" rx="0.6" fill="#bdbdbd"/><rect x="4.6" y="6" width="1.5" height="2.6" fill="#272727"/></svg>
<span class="t" style="left:205px;top:579.33px;font-size:9.3px;line-height:9.3px;color:#a9c0dc;font-weight:400;">A2</span>
<svg style="left:235px;top:605.1px;" width="14" height="12" viewBox="0 0 14 12"><path d="M5 1.3 L8.3 3.8 L8.3 8 L5 10.4 L1.7 8 L1.7 3.8z" fill="none" stroke="#bdbdbd" stroke-width="1.7" stroke-linejoin="round"/><rect x="9.6" y="8.9" width="3.7" height="2" rx="1" fill="#bdbdbd"/></svg>
<svg style="left:267px;top:605.6px;" width="8" height="10" viewBox="0 0 8 10"><path d="M7.5 1 v8 l-6.5 -4z" fill="#4e4e4e"/></svg>
<div style="left:194.2px;top:622.6px;width:34px;height:44.39999999999998px;background:#2a5f97;"></div>
<div style="left:228.6px;top:622.6px;width:29px;height:21px;background:#212121;"></div>
<div style="left:274.2px;top:622.6px;width:8px;height:44.39999999999998px;background:#242424;"></div>
<svg style="left:235.8px;top:628.1px;" width="14" height="10" viewBox="0 0 14 10"><rect x="0.8" y="0.8" width="9" height="3.6" rx="1" fill="none" stroke="#bdbdbd" stroke-width="1.4"/><rect x="0.8" y="5.4" width="9" height="3.6" rx="1" fill="none" stroke="#bdbdbd" stroke-width="1.4"/><rect x="9.5" y="2.2" width="3.8" height="5.6" fill="#bdbdbd"/></svg>
<svg style="left:265.4px;top:630.1px;" width="10" height="8" viewBox="0 0 10 8"><path d="M1.2 7.3 L1.9 1 L5 4.3 L8.1 1 L8.8 7.3" fill="none" stroke="#bdbdbd" stroke-width="1.7" stroke-linejoin="round"/></svg>
<span class="t" style="left:230.3px;top:650.86px;font-size:10.8px;line-height:10.8px;color:#c0c0c0;font-weight:400;">SFX1</span>
<svg style="left:178.5px;top:645.1px;" width="11" height="12" viewBox="0 0 11 12"><path d="M2.9 4.6 v-1.4 a2.5 2.4 0 0 1 4.9 -0.6" fill="none" stroke="#bdbdbd" stroke-width="1.6"/><rect x="0.8" y="4.2" width="9" height="6.2" rx="0.6" fill="#bdbdbd"/><rect x="4.6" y="6" width="1.5" height="2.6" fill="#272727"/></svg>
<span class="t" style="left:205px;top:648.33px;font-size:9.3px;line-height:9.3px;color:#a9c0dc;font-weight:400;">A3</span>
<span class="t" style="left:296px;top:629.03px;font-size:10px;line-height:10px;color:#c0c0c0;font-weight:400;">S</span>
<svg style="left:321px;top:626px;" width="12" height="15" viewBox="0 0 12 15"><rect x="3" y="1" width="6" height="8.5" rx="3" fill="#4d4d4d"/><path d="M1.5 6.5 v1 a4.5 4.5 0 0 0 9 0 v-1 M6 12 v2 M3 14 h6" fill="none" stroke="#4d4d4d" stroke-width="1.2"/></svg>
<div style="left:564px;top:412.5px;width:86.0px;height:22.2px;background:#d88fdc;overflow:hidden;box-shadow:inset -1px 0 0 rgba(0,0,0,0.25)">
<div style="left:11px;top:3.2px;width:12px;height:10px;background:#a59ee0;border-radius:1px"></div>
<span class="t" style="left:12.6px;top:2.6px;font-size:9px;line-height:10px;font-style:italic;color:#6c5aa8;font-family:'Liberation Serif',serif">fx</span>
<span class="t" style="left:30.5px;top:2.7px;font-size:9.9px;line-height:11px;color:#4a2356">Adjustment</span>
</div>
<div style="left:761.4px;top:412.5px;width:61.1px;height:22.2px;background:#d88fdc;overflow:hidden;box-shadow:inset -1px 0 0 rgba(0,0,0,0.25)">
<div style="left:11px;top:3.2px;width:12px;height:10px;background:#a59ee0;border-radius:1px"></div>
<span class="t" style="left:12.6px;top:2.6px;font-size:9px;line-height:10px;font-style:italic;color:#6c5aa8;font-family:'Liberation Serif',serif">fx</span>
<span class="t" style="left:30.5px;top:2.7px;font-size:9.9px;line-height:11px;color:#4a2356">Adjust</span>
</div>
<div style="left:859px;top:412.5px;width:72.0px;height:22.2px;background:#d88fdc;overflow:hidden;box-shadow:inset -1px 0 0 rgba(0,0,0,0.25)">
<div style="left:11px;top:3.2px;width:12px;height:10px;background:#a59ee0;border-radius:1px"></div>
<span class="t" style="left:12.6px;top:2.6px;font-size:9px;line-height:10px;font-style:italic;color:#6c5aa8;font-family:'Liberation Serif',serif">fx</span>
<span class="t" style="left:30.5px;top:2.7px;font-size:9.9px;line-height:11px;color:#4a2356">Adjustme</span>
</div>
<div style="left:1049.5px;top:412.5px;width:30.5px;height:22.2px;background:#d88fdc;overflow:hidden;box-shadow:inset -1px 0 0 rgba(0,0,0,0.25)">
<div style="left:11px;top:3.2px;width:12px;height:10px;background:#a59ee0;border-radius:1px"></div>
<span class="t" style="left:12.6px;top:2.6px;font-size:9px;line-height:10px;font-style:italic;color:#6c5aa8;font-family:'Liberation Serif',serif">fx</span>
</div>
<div style="left:564px;top:435.7px;width:86.0px;height:21.8px;background:#89a7d5;overflow:hidden;box-shadow:inset -1px 0 0 rgba(0,0,0,0.25)">
<div style="left:11px;top:3.0px;width:12px;height:10px;background:#e8cf4a;border-radius:1px"></div>
<span class="t" style="left:12.6px;top:2.4px;font-size:9px;line-height:10px;font-style:italic;color:#7a6a1a;font-family:'Liberation Serif',serif">fx</span>
<span class="t" style="left:30.5px;top:2.5px;font-size:9.9px;line-height:11px;color:#1e2a3c">DCP_Premie</span>
</div>
<div style="left:761.4px;top:435.7px;width:20.2px;height:21.8px;background:#89a7d5;overflow:hidden;box-shadow:inset -1px 0 0 rgba(0,0,0,0.25)">
</div>
<div style="left:783px;top:435.7px;width:39.5px;height:21.8px;background:#89a7d5;overflow:hidden;box-shadow:inset -1px 0 0 rgba(0,0,0,0.25)">
<div style="left:11px;top:3.0px;width:12px;height:10px;background:#e8cf4a;border-radius:1px"></div>
<span class="t" style="left:12.6px;top:2.4px;font-size:9px;line-height:10px;font-style:italic;color:#7a6a1a;font-family:'Liberation Serif',serif">fx</span>
</div>
<div style="left:859px;top:435.7px;width:72.0px;height:21.8px;background:#89a7d5;overflow:hidden;box-shadow:inset -1px 0 0 rgba(0,0,0,0.25)">
<div style="left:11px;top:3.0px;width:12px;height:10px;background:#e8cf4a;border-radius:1px"></div>
<span class="t" style="left:12.6px;top:2.4px;font-size:9px;line-height:10px;font-style:italic;color:#7a6a1a;font-family:'Liberation Serif',serif">fx</span>
<span class="t" style="left:30.5px;top:2.5px;font-size:9.9px;line-height:11px;color:#1e2a3c">DCP_Pre</span>
</div>
<div style="left:1049.5px;top:435.7px;width:30.5px;height:21.8px;background:#89a7d5;overflow:hidden;box-shadow:inset -1px 0 0 rgba(0,0,0,0.25)">
<div style="left:11px;top:3.0px;width:12px;height:10px;background:#e8cf4a;border-radius:1px"></div>
<span class="t" style="left:12.6px;top:2.4px;font-size:9px;line-height:10px;font-style:italic;color:#7a6a1a;font-family:'Liberation Serif',serif">fx</span>
</div>
<div style="left:376px;top:458.3px;width:446.5px;height:22.3px;background:#89a7d5;overflow:hidden"><span class="t" style="left:31px;top:2.4px;font-size:9.5px;line-height:11px;color:#1e2a3c;letter-spacing:-0.1px">DCP_Premiere&amp;Davinci_forCC.mov</span></div>
<div style="left:435px;top:458.3px;width:0px;height:1px"></div>
<div style="left:822.5px;top:458.3px;width:35.8px;height:22.3px;background:#b199dc;overflow:hidden;box-shadow:inset -1px 0 0 rgba(0,0,0,0.25)">
</div>
<div style="left:834.8px;top:461.6px;width:12px;height:10px;background:#e8cf4a;border-radius:1px"></div><span class="t" style="left:836.4px;top:461.0px;font-size:9px;line-height:10px;font-style:italic;color:#7a6a1a;font-family:'Liberation Serif',serif">fx</span>
<div style="left:858.3px;top:458.3px;width:221.7px;height:22.3px;background:#89a7d5;overflow:hidden;box-shadow:inset -1px 0 0 rgba(0,0,0,0.25)">
<div style="left:11px;top:3.3px;width:12px;height:10px;background:#6e6e6e;border-radius:1px"></div>
<span class="t" style="left:12.6px;top:2.7px;font-size:9px;line-height:10px;font-style:italic;color:#3a3a3a;font-family:'Liberation Serif',serif">fx</span>
<span class="t" style="left:30.5px;top:2.8px;font-size:9.9px;line-height:11px;color:#1e2a3c"><span style="font-size:9.5px;letter-spacing:-0.1px;left:2px">DCP_Premiere&amp;Davinci_forCC.mov</span></span>
</div>
<svg style="left:564px;top:485px" width="60.6" height="67.6"><rect x="0" y="0" width="60.6" height="67.6" fill="#4f6184"/><path d="M0 27.5L0 17.7L1 17.7L2 16.3L3 16.6L4 17.8L5 16.5L6 16.0L7 4.4L8 15.9L9 15.9L10 16.9L11 16.9L12 17.6L13 17.6L14 7.5L15 12.5L16 17.4L17 17.4L18 18.0L19 18.0L20 16.6L21 19.3L22 15.8L23 15.8L24 17.4L25 17.4L26 14.7L27 14.7L28 15.2L29 15.2L30 17.2L31 17.2L32 18.7L33 18.0L34 16.2L35 16.2L36 17.8L37 16.7L38 16.6L39 17.1L40 16.1L41 16.1L42 11.6L43 18.5L44 17.6L45 17.6L46 17.5L47 17.5L48 17.5L49 17.5L50 18.0L51 18.0L52 2.4L53 2.4L54 16.9L55 16.9L56 15.8L57 15.8L58 17.4L59 17.4L60 5.3L60 27.5Z" fill="#8aa7d6"/><rect x="0" y="28.7" width="60.6" height="5.2" fill="#8aa7d6"/><path d="M0 67.60000000000002L0 55.2L1 55.2L2 53.4L3 53.7L4 55.2L5 53.6L6 53.0L7 38.3L8 52.8L9 52.8L10 54.1L11 54.1L12 55.0L13 55.0L14 42.2L15 48.5L16 54.8L17 54.8L18 55.5L19 55.5L20 53.8L21 57.2L22 52.7L23 52.7L24 54.7L25 54.7L26 51.3L27 51.3L28 52.0L29 52.0L30 54.5L31 54.5L32 56.4L33 55.5L34 53.2L35 53.2L36 55.2L37 53.9L38 53.8L39 54.3L40 53.0L41 53.0L42 47.4L43 56.2L44 55.0L45 55.0L46 54.9L47 54.9L48 54.9L49 54.9L50 55.5L51 55.5L52 35.7L53 35.7L54 54.2L55 54.2L56 52.7L57 52.7L58 54.8L59 54.8L60 39.4L60 67.60000000000002Z" fill="#8aa7d6"/><rect x="0" y="26.9" width="60.6" height="1.6" fill="#e3e3e3"/><rect x="0" y="0" width="1.5" height="67.6" fill="#8aa7d6" opacity="0.8"/><rect x="1.5" y="0" width="0.8" height="67.6" fill="rgba(0,0,0,0.3)"/><rect x="11" y="3" width="12" height="9.5" fill="#8c8c8c" stroke="#bdbdbd" stroke-width="0.8"/><text x="13.3" y="10.8" font-family="Liberation Serif" font-style="italic" font-size="9" fill="#4a4a4a">fx</text><rect x="2.5" y="17.5" width="8.5" height="10" fill="#4b5a7a"/><rect x="2.5" y="52.6" width="8.5" height="11" fill="#4b5a7a"/><text x="3.6" y="61.4" font-family="Liberation Sans" font-size="9.5" fill="#b7b7b7">R</text></svg>
<svg style="left:624.6px;top:485px" width="26.4" height="67.6"><rect x="0" y="0" width="26.4" height="67.6" fill="#4f6184"/><path d="M0 27.5L0 17.1L1 17.1L2 17.6L3 17.6L4 17.8L5 17.8L6 16.4L7 16.7L8 17.6L9 18.4L10 16.5L11 16.7L12 17.0L13 17.0L14 18.3L15 18.3L16 17.2L17 17.2L18 15.7L19 15.7L20 16.2L21 16.2L22 16.2L23 16.2L24 15.0L25 15.0L26 15.9L26 27.5Z" fill="#8aa7d6"/><rect x="0" y="28.7" width="26.4" height="5.2" fill="#8aa7d6"/><path d="M0 67.60000000000002L0 54.4L1 54.4L2 55.0L3 55.0L4 55.3L5 55.3L6 53.5L7 53.9L8 55.0L9 56.0L10 53.6L11 53.8L12 54.3L13 54.3L14 55.9L15 55.9L16 54.5L17 54.5L18 52.6L19 52.6L20 53.2L21 53.2L22 53.2L23 53.2L24 51.7L25 51.7L26 52.8L26 67.60000000000002Z" fill="#8aa7d6"/><rect x="0" y="26.9" width="26.4" height="1.6" fill="#e3e3e3"/><rect x="0" y="0" width="1.5" height="67.6" fill="#8aa7d6" opacity="0.8"/><rect x="1.5" y="0" width="0.8" height="67.6" fill="rgba(0,0,0,0.3)"/><rect x="2.5" y="17.5" width="8.5" height="10" fill="#4b5a7a"/><rect x="2.5" y="52.6" width="8.5" height="11" fill="#4b5a7a"/><text x="3.6" y="61.4" font-family="Liberation Sans" font-size="9.5" fill="#b7b7b7">R</text></svg>
<svg style="left:651px;top:485px" width="70.7" height="67.6"><rect x="0" y="0" width="70.7" height="67.6" fill="#4f6184"/><path d="M0 27.5L0 16.3L1 16.3L2 18.0L3 15.7L4 18.9L5 18.9L6 12.7L7 12.7L8 18.8L9 18.8L10 17.5L11 17.5L12 19.0L13 19.0L14 18.2L15 16.9L16 17.5L17 18.6L18 19.1L19 8.5L20 14.8L21 14.8L22 16.7L23 16.7L24 15.4L25 15.4L26 6.5L27 6.5L28 16.8L29 16.9L30 17.4L31 17.4L32 17.5L33 17.5L34 15.4L35 15.4L36 17.9L37 16.0L38 17.3L39 17.3L40 19.0L41 19.0L42 18.2L43 18.2L44 17.4L45 17.4L46 18.3L47 18.3L48 17.5L49 16.5L50 16.4L51 19.0L52 17.9L53 17.9L54 19.6L55 19.6L56 3.1L57 3.1L58 16.2L59 16.2L60 18.3L61 18.3L62 16.1L63 16.1L64 16.9L65 16.9L66 15.4L67 16.9L68 16.2L69 16.2L70 4.8L70 27.5Z" fill="#8aa7d6"/><rect x="0" y="28.7" width="70.7" height="5.2" fill="#8aa7d6"/><path d="M0 67.60000000000002L0 53.3L1 53.3L2 55.6L3 52.6L4 56.6L5 56.6L6 48.8L7 48.8L8 56.5L9 56.5L10 54.9L11 54.9L12 56.8L13 56.8L14 55.8L15 54.1L16 54.8L17 56.3L18 56.9L19 43.4L20 51.4L21 51.4L22 53.9L23 53.9L24 52.2L25 52.2L26 40.9L27 40.9L28 54.0L29 54.2L30 54.8L31 54.8L32 54.9L33 54.9L34 52.2L35 52.2L36 55.3L37 53.0L38 54.7L39 54.7L40 56.8L41 56.8L42 55.8L43 55.8L44 54.8L45 54.8L46 55.9L47 55.9L48 54.9L49 53.6L50 53.4L51 56.8L52 55.4L53 55.4L54 57.5L55 57.5L56 36.6L57 36.6L58 53.2L59 53.2L60 55.8L61 55.8L62 53.1L63 53.1L64 54.1L65 54.1L66 52.2L67 54.1L68 53.2L69 53.2L70 38.8L70 67.60000000000002Z" fill="#8aa7d6"/><rect x="0" y="26.9" width="70.7" height="1.6" fill="#e3e3e3"/><rect x="0" y="0" width="1.5" height="67.6" fill="#8aa7d6" opacity="0.8"/><rect x="1.5" y="0" width="0.8" height="67.6" fill="rgba(0,0,0,0.3)"/><rect x="11" y="3" width="12" height="9.5" fill="#8c8c8c" stroke="#bdbdbd" stroke-width="0.8"/><text x="13.3" y="10.8" font-family="Liberation Serif" font-style="italic" font-size="9" fill="#4a4a4a">fx</text><rect x="2.5" y="17.5" width="8.5" height="10" fill="#4b5a7a"/><rect x="2.5" y="52.6" width="8.5" height="11" fill="#4b5a7a"/><text x="3.6" y="61.4" font-family="Liberation Sans" font-size="9.5" fill="#b7b7b7">R</text></svg>
<svg style="left:721.7px;top:485px" width="31.0" height="67.6"><rect x="0" y="0" width="31.0" height="67.6" fill="#4f6184"/><path d="M0 27.5L0 15.0L1 15.9L2 18.4L3 17.6L4 16.2L5 16.2L6 15.9L7 15.9L8 17.1L9 17.1L10 16.8L11 16.8L12 17.7L13 17.7L14 17.5L15 15.4L16 14.9L17 17.8L18 18.0L19 19.1L20 19.2L21 19.2L22 17.3L23 17.3L24 16.6L25 16.6L26 15.9L27 15.9L28 3.3L29 7.4L30 15.5L31 15.5L31 27.5Z" fill="#8aa7d6"/><rect x="0" y="28.7" width="31.0" height="5.2" fill="#8aa7d6"/><path d="M0 67.60000000000002L0 51.7L1 52.8L2 56.1L3 55.0L4 53.2L5 53.2L6 52.9L7 52.9L8 54.4L9 54.4L10 53.9L11 53.9L12 55.2L13 55.2L14 54.9L15 52.2L16 51.6L17 55.2L18 55.6L19 56.9L20 57.0L21 57.0L22 54.6L23 54.6L24 53.7L25 53.7L26 52.8L27 52.8L28 36.8L29 42.0L30 52.4L31 52.4L31 67.60000000000002Z" fill="#8aa7d6"/><rect x="0" y="26.9" width="31.0" height="1.6" fill="#e3e3e3"/><rect x="0" y="0" width="1.5" height="67.6" fill="#8aa7d6" opacity="0.8"/><rect x="1.5" y="0" width="0.8" height="67.6" fill="rgba(0,0,0,0.3)"/><rect x="11" y="3" width="12" height="9.5" fill="#8c8c8c" stroke="#bdbdbd" stroke-width="0.8"/><text x="13.3" y="10.8" font-family="Liberation Serif" font-style="italic" font-size="9" fill="#4a4a4a">fx</text><rect x="2.5" y="17.5" width="8.5" height="10" fill="#4b5a7a"/><rect x="2.5" y="52.6" width="8.5" height="11" fill="#4b5a7a"/><text x="3.6" y="61.4" font-family="Liberation Sans" font-size="9.5" fill="#b7b7b7">R</text></svg>
<svg style="left:760.8px;top:485px" width="21.7" height="67.6"><rect x="0" y="0" width="21.7" height="67.6" fill="#4f6184"/><path d="M0 27.5L0 16.8L1 16.8L2 15.8L3 6.4L4 18.2L5 18.2L6 16.0L7 16.0L8 15.9L9 15.9L10 4.4L11 4.4L12 13.4L13 13.4L14 15.3L15 15.3L16 14.4L17 14.4L18 14.0L19 14.0L20 16.1L21 17.8L21 27.5Z" fill="#8aa7d6"/><rect x="0" y="28.7" width="21.7" height="5.2" fill="#8aa7d6"/><path d="M0 67.60000000000002L0 54.0L1 54.0L2 52.8L3 40.8L4 55.8L5 55.8L6 53.0L7 53.0L8 52.8L9 52.8L10 38.3L11 38.3L12 49.7L13 49.7L14 52.1L15 52.1L16 50.9L17 50.9L18 50.4L19 50.4L20 53.1L21 55.3L21 67.60000000000002Z" fill="#8aa7d6"/><rect x="0" y="26.9" width="21.7" height="1.6" fill="#e3e3e3"/><rect x="0" y="0" width="1.5" height="67.6" fill="#8aa7d6" opacity="0.8"/><rect x="1.5" y="0" width="0.8" height="67.6" fill="rgba(0,0,0,0.3)"/><rect x="2.5" y="17.5" width="8.5" height="10" fill="#4b5a7a"/><rect x="2.5" y="52.6" width="8.5" height="11" fill="#4b5a7a"/><text x="3.6" y="61.4" font-family="Liberation Sans" font-size="9.5" fill="#b7b7b7">R</text></svg>
<svg style="left:782.5px;top:485px" width="76.5" height="67.6"><rect x="0" y="0" width="76.5" height="67.6" fill="#4f6184"/><path d="M0 27.5L0 3.0L1 3.0L2 16.3L3 16.9L4 15.7L5 17.6L6 17.9L7 17.9L8 5.5L9 16.8L10 17.0L11 17.0L12 19.0L13 16.8L14 4.4L15 4.4L16 16.3L17 16.3L18 17.3L19 17.3L20 17.3L21 17.3L22 18.0L23 18.0L24 20.1L25 20.1L26 17.8L27 17.8L28 17.7L29 19.5L30 19.7L31 19.7L32 10.3L33 10.3L34 11.0L35 16.7L36 12.4L37 12.4L38 16.5L39 16.5L40 15.7L41 15.7L42 17.8L43 17.8L44 16.0L45 17.6L46 16.3L47 16.3L48 15.7L49 17.0L50 16.8L51 16.7L52 14.3L53 14.3L54 16.2L55 15.7L56 7.1L57 15.1L58 16.5L59 17.2L60 14.0L61 14.0L62 17.0L63 17.0L64 15.7L65 16.1L66 17.6L67 17.6L68 18.1L69 18.1L70 12.1L71 12.1L72 16.2L73 17.1L74 13.1L75 13.1L76 19.0L76 27.5Z" fill="#8aa7d6"/><rect x="0" y="28.7" width="76.5" height="5.2" fill="#8aa7d6"/><path d="M0 67.60000000000002L0 36.5L1 36.5L2 53.4L3 54.2L4 52.6L5 55.0L6 55.4L7 55.4L8 39.6L9 54.0L10 54.3L11 54.3L12 56.8L13 53.9L14 38.2L15 38.2L16 53.4L17 53.4L18 54.7L19 54.7L20 54.7L21 54.7L22 55.5L23 55.5L24 58.1L25 58.1L26 55.2L27 55.2L28 55.1L29 57.5L30 57.7L31 57.7L32 45.7L33 45.7L34 46.6L35 53.9L36 48.4L37 48.4L38 53.6L39 53.6L40 52.6L41 52.6L42 55.3L43 55.3L44 52.9L45 55.1L46 53.4L47 53.4L48 52.6L49 54.3L50 53.9L51 53.8L52 50.8L53 50.8L54 53.2L55 52.6L56 41.7L57 51.8L58 53.7L59 54.4L60 50.4L61 50.4L62 54.3L63 54.3L64 52.6L65 53.0L66 55.0L67 55.0L68 55.7L69 55.7L70 48.0L71 48.0L72 53.2L73 54.4L74 49.2L75 49.2L76 56.8L76 67.60000000000002Z" fill="#8aa7d6"/><rect x="0" y="26.9" width="76.5" height="1.6" fill="#e3e3e3"/><rect x="0" y="0" width="1.5" height="67.6" fill="#8aa7d6" opacity="0.8"/><rect x="1.5" y="0" width="0.8" height="67.6" fill="rgba(0,0,0,0.3)"/><rect x="11" y="3" width="12" height="9.5" fill="#8c8c8c" stroke="#bdbdbd" stroke-width="0.8"/><text x="13.3" y="10.8" font-family="Liberation Serif" font-style="italic" font-size="9" fill="#4a4a4a">fx</text><rect x="2.5" y="17.5" width="8.5" height="10" fill="#4b5a7a"/><rect x="2.5" y="52.6" width="8.5" height="11" fill="#4b5a7a"/><text x="3.6" y="61.4" font-family="Liberation Sans" font-size="9.5" fill="#b7b7b7">R</text></svg>
<svg style="left:859px;top:485px" width="72.0" height="67.6"><rect x="0" y="0" width="72.0" height="67.6" fill="#4f6184"/><path d="M0 27.5L0 17.0L1 17.0L2 2.3L3 2.3L4 17.3L5 17.3L6 18.4L7 18.4L8 9.8L9 11.0L10 18.1L11 17.9L12 16.9L13 16.9L14 16.3L15 16.5L16 15.3L17 15.3L18 15.1L19 15.1L20 15.5L21 15.5L22 15.4L23 15.4L24 14.8L25 14.8L26 16.7L27 16.7L28 17.1L29 17.1L30 14.9L31 14.9L32 14.3L33 14.3L34 16.3L35 16.3L36 14.8L37 14.2L38 17.1L39 15.9L40 17.0L41 17.0L42 18.7L43 18.7L44 17.9L45 17.8L46 15.5L47 15.5L48 15.5L49 15.5L50 16.6L51 16.6L52 4.5L53 4.5L54 10.0L55 10.0L56 15.1L57 15.1L58 15.8L59 15.8L60 16.5L61 15.6L62 16.6L63 16.6L64 15.0L65 15.0L66 16.2L67 16.3L68 13.6L69 13.6L70 18.5L71 9.3L72 16.3L72 27.5Z" fill="#8aa7d6"/><rect x="0" y="28.7" width="72.0" height="5.2" fill="#8aa7d6"/><path d="M0 67.60000000000002L0 54.3L1 54.3L2 35.6L3 35.6L4 54.6L5 54.6L6 56.1L7 56.1L8 45.1L9 46.6L10 55.7L11 55.3L12 54.1L13 54.1L14 53.3L15 53.7L16 52.1L17 52.1L18 51.8L19 51.8L20 52.4L21 52.4L22 52.2L23 52.2L24 51.5L25 51.5L26 53.9L27 53.9L28 54.3L29 54.3L30 51.6L31 51.6L32 50.9L33 50.9L34 53.3L35 53.3L36 51.5L37 50.7L38 54.3L39 52.8L40 54.2L41 54.2L42 56.4L43 56.4L44 55.4L45 55.3L46 52.4L47 52.4L48 52.3L49 52.3L50 53.8L51 53.8L52 38.4L53 38.4L54 45.3L55 45.3L56 51.9L57 51.9L58 52.7L59 52.7L60 53.7L61 52.5L62 53.7L63 53.7L64 51.7L65 51.7L66 53.3L67 53.3L68 49.9L69 49.9L70 56.2L71 44.4L72 53.4L72 67.60000000000002Z" fill="#8aa7d6"/><rect x="0" y="26.9" width="72.0" height="1.6" fill="#e3e3e3"/><rect x="0" y="0" width="1.5" height="67.6" fill="#8aa7d6" opacity="0.8"/><rect x="1.5" y="0" width="0.8" height="67.6" fill="rgba(0,0,0,0.3)"/><rect x="11" y="3" width="12" height="9.5" fill="#8c8c8c" stroke="#bdbdbd" stroke-width="0.8"/><text x="13.3" y="10.8" font-family="Liberation Serif" font-style="italic" font-size="9" fill="#4a4a4a">fx</text><rect x="2.5" y="17.5" width="8.5" height="10" fill="#4b5a7a"/><rect x="2.5" y="52.6" width="8.5" height="11" fill="#4b5a7a"/><text x="3.6" y="61.4" font-family="Liberation Sans" font-size="9.5" fill="#b7b7b7">R</text></svg>
<svg style="left:931px;top:485px" width="42.0" height="67.6"><rect x="0" y="0" width="42.0" height="67.6" fill="#4f6184"/><path d="M0 27.5L0 16.5L1 16.5L2 11.7L3 18.0L4 10.4L5 10.4L6 16.2L7 16.2L8 16.7L9 16.7L10 16.8L11 16.8L12 17.1L13 17.1L14 17.1L15 17.1L16 17.9L17 17.2L18 18.1L19 18.1L20 16.9L21 16.9L22 5.5L23 5.5L24 18.5L25 5.4L26 17.0L27 17.0L28 17.4L29 17.4L30 18.3L31 18.3L32 3.3L33 3.3L34 16.7L35 18.9L36 19.1L37 19.1L38 19.7L39 19.7L40 16.6L41 16.6L42 18.3L42 27.5Z" fill="#8aa7d6"/><rect x="0" y="28.7" width="42.0" height="5.2" fill="#8aa7d6"/><path d="M0 67.60000000000002L0 53.6L1 53.6L2 47.5L3 55.6L4 45.9L5 45.9L6 53.2L7 53.2L8 53.8L9 53.8L10 54.0L11 54.0L12 54.4L13 54.4L14 54.3L15 54.3L16 55.4L17 54.5L18 55.6L19 55.6L20 54.1L21 54.1L22 39.6L23 39.6L24 56.1L25 39.5L26 54.3L27 54.3L28 54.8L29 54.8L30 55.9L31 55.9L32 36.8L33 36.8L34 53.9L35 56.7L36 56.9L37 56.9L38 57.7L39 57.7L40 53.8L41 53.8L42 55.9L42 67.60000000000002Z" fill="#8aa7d6"/><rect x="0" y="26.9" width="42.0" height="1.6" fill="#e3e3e3"/><rect x="0" y="0" width="1.5" height="67.6" fill="#8aa7d6" opacity="0.8"/><rect x="1.5" y="0" width="0.8" height="67.6" fill="rgba(0,0,0,0.3)"/><rect x="11" y="3" width="12" height="9.5" fill="#8c8c8c" stroke="#bdbdbd" stroke-width="0.8"/><text x="13.3" y="10.8" font-family="Liberation Serif" font-style="italic" font-size="9" fill="#4a4a4a">fx</text><rect x="2.5" y="17.5" width="8.5" height="10" fill="#4b5a7a"/><rect x="2.5" y="52.6" width="8.5" height="11" fill="#4b5a7a"/><text x="3.6" y="61.4" font-family="Liberation Sans" font-size="9.5" fill="#b7b7b7">R</text></svg>
<svg style="left:1048.6px;top:485px" width="31.4" height="67.6"><rect x="0" y="0" width="31.4" height="67.6" fill="#4f6184"/><path d="M0 27.5L0 17.4L1 15.7L2 16.2L3 17.6L4 15.8L5 15.8L6 17.6L7 17.6L8 15.4L9 15.4L10 18.1L11 18.1L12 16.9L13 16.9L14 15.7L15 15.7L16 8.7L17 8.7L18 14.6L19 14.6L20 15.3L21 15.3L22 16.1L23 16.1L24 16.2L25 15.0L26 17.3L27 15.5L28 5.6L29 5.6L30 15.1L31 15.1L31 27.5Z" fill="#8aa7d6"/><rect x="0" y="28.7" width="31.4" height="5.2" fill="#8aa7d6"/><path d="M0 67.60000000000002L0 54.7L1 52.6L2 53.2L3 55.0L4 52.8L5 52.7L6 55.1L7 55.1L8 52.3L9 52.3L10 55.7L11 55.7L12 54.1L13 54.1L14 52.6L15 52.6L16 43.7L17 43.7L18 51.2L19 51.2L20 52.0L21 52.0L22 53.1L23 53.1L24 53.2L25 51.6L26 54.7L27 52.3L28 39.8L29 39.8L30 51.9L31 51.9L31 67.60000000000002Z" fill="#8aa7d6"/><rect x="0" y="26.9" width="31.4" height="1.6" fill="#e3e3e3"/><rect x="0" y="0" width="1.5" height="67.6" fill="#8aa7d6" opacity="0.8"/><rect x="1.5" y="0" width="0.8" height="67.6" fill="rgba(0,0,0,0.3)"/><rect x="11" y="3" width="12" height="9.5" fill="#8c8c8c" stroke="#bdbdbd" stroke-width="0.8"/><text x="13.3" y="10.8" font-family="Liberation Serif" font-style="italic" font-size="9" fill="#4a4a4a">fx</text><rect x="2.5" y="17.5" width="8.5" height="10" fill="#4b5a7a"/><rect x="2.5" y="52.6" width="8.5" height="11" fill="#4b5a7a"/><text x="3.6" y="61.4" font-family="Liberation Sans" font-size="9.5" fill="#b7b7b7">R</text></svg>
<svg style="left:973px;top:485px" width="75.6" height="67.6"><rect x="0" y="0" width="75.6" height="67.6" fill="#7a64a6"/><path d="M0 27.5L0 16.6L1 17.1L2 17.4L3 6.7L4 16.8L5 16.8L6 17.4L7 17.4L8 15.4L9 15.4L10 14.4L11 14.4L12 16.4L13 16.4L14 4.4L15 4.4L16 17.6L17 17.2L18 16.0L19 16.0L20 15.8L21 15.8L22 18.7L23 18.7L24 16.4L25 12.5L26 16.1L27 16.1L28 11.4L29 11.4L30 18.9L31 10.3L32 13.4L33 13.4L34 17.5L35 17.5L36 17.9L37 17.9L38 15.7L39 15.7L40 16.0L41 18.0L42 12.6L43 12.6L44 17.5L45 17.7L46 12.2L47 5.0L48 17.3L49 15.8L50 16.2L51 16.2L52 16.4L53 16.4L54 14.6L55 14.6L56 17.4L57 16.0L58 15.2L59 17.0L60 15.4L61 15.6L62 15.3L63 15.3L64 9.8L65 17.5L66 15.5L67 16.9L68 17.4L69 17.4L70 17.9L71 17.9L72 16.9L73 16.0L74 13.9L75 13.9L75 27.5Z" fill="#b39bde"/><rect x="0" y="28.7" width="75.6" height="5.2" fill="#b39bde"/><path d="M0 67.60000000000002L0 53.7L1 54.3L2 54.7L3 41.2L4 54.0L5 54.0L6 54.8L7 54.8L8 52.2L9 52.2L10 50.9L11 50.9L12 53.5L13 53.5L14 38.3L15 38.3L16 55.0L17 54.5L18 53.0L19 53.0L20 52.7L21 52.7L22 56.5L23 56.5L24 53.5L25 48.5L26 53.1L27 53.1L28 47.2L29 47.2L30 56.7L31 45.7L32 49.7L33 49.7L34 54.9L35 54.9L36 55.4L37 55.4L38 52.6L39 52.6L40 53.0L41 55.5L42 48.7L43 48.7L44 54.9L45 55.2L46 48.1L47 39.0L48 54.6L49 52.7L50 53.3L51 53.3L52 53.4L53 53.4L54 51.2L55 51.2L56 54.7L57 53.0L58 52.0L59 54.2L60 52.2L61 52.5L62 52.1L63 52.1L64 45.0L65 54.8L66 52.3L67 54.1L68 54.7L69 54.7L70 55.4L71 55.4L72 54.2L73 53.0L74 50.2L75 50.2L75 67.60000000000002Z" fill="#b39bde"/><rect x="0" y="26.9" width="75.6" height="1.6" fill="#e3e3e3"/><rect x="0" y="0" width="1.5" height="67.6" fill="#b39bde" opacity="0.8"/><rect x="1.5" y="0" width="0.8" height="67.6" fill="rgba(0,0,0,0.3)"/><rect x="11" y="3" width="12" height="9.5" fill="#8c8c8c" stroke="#bdbdbd" stroke-width="0.8"/><text x="13.3" y="10.8" font-family="Liberation Serif" font-style="italic" font-size="9" fill="#4a4a4a">fx</text><rect x="2.5" y="17.5" width="8.5" height="10" fill="#6a5a8a"/><rect x="2.5" y="52.6" width="8.5" height="11" fill="#6a5a8a"/><text x="3.6" y="61.4" font-family="Liberation Sans" font-size="9.5" fill="#b7b7b7">R</text></svg>
<svg style="left:376px;top:553.6px" width="182.8" height="68.0"><rect x="0" y="0" width="182.8" height="68.0" fill="#53668b"/><path d="M0 27.799999999999955L0 4.1L1 4.7L2 2.5L3 13.3L4 6.5L5 3.5L6 2.2L7 3.5L8 2.4L9 2.3L10 2.2L11 2.5L12 8.5L13 4.4L14 2.5L15 7.3L16 3.9L17 4.4L18 3.6L19 2.7L20 2.0L21 18.6L22 8.9L23 4.6L24 3.0L25 2.4L26 3.4L27 2.1L28 2.5L29 2.7L30 3.0L31 21.1L32 15.7L33 7.9L34 4.1L35 2.4L36 4.3L37 3.5L38 3.7L39 4.9L40 10.9L41 5.4L42 3.0L43 3.8L44 2.0L45 4.6L46 7.7L47 4.0L48 2.4L49 3.0L50 2.3L51 2.2L52 2.5L53 4.8L54 19.4L55 9.3L56 20.2L57 14.3L58 7.0L59 4.4L60 2.9L61 12.1L62 9.7L63 4.9L64 3.7L65 2.7L66 2.4L67 7.3L68 3.8L69 2.3L70 2.3L71 2.2L72 3.7L73 14.0L74 6.9L75 3.6L76 2.8L77 3.9L78 4.4L79 3.4L80 3.9L81 4.1L82 2.6L83 2.6L84 2.2L85 2.1L86 3.6L87 2.3L88 3.0L89 2.4L90 2.6L91 4.5L92 2.2L93 2.5L94 2.3L95 2.8L96 4.8L97 7.1L98 3.8L99 3.3L100 2.0L101 16.5L102 8.0L103 4.1L104 2.4L105 17.7L106 8.5L107 10.1L108 5.1L109 3.6L110 4.2L111 3.7L112 2.0L113 17.9L114 8.6L115 4.5L116 2.8L117 2.4L118 2.2L119 3.1L120 4.2L121 10.0L122 5.1L123 15.9L124 10.7L125 5.3L126 3.9L127 2.0L128 3.0L129 2.0L130 4.1L131 12.7L132 21.5L133 15.7L134 7.6L135 4.0L136 19.1L137 9.2L138 19.0L139 9.1L140 4.8L141 4.1L142 2.0L143 3.2L144 16.3L145 7.9L146 4.1L147 3.9L148 2.3L149 3.0L150 11.2L151 5.6L152 3.3L153 2.1L154 17.8L155 8.5L156 4.4L157 2.5L158 2.9L159 2.2L160 20.1L161 9.6L162 4.9L163 3.2L164 2.4L165 2.6L166 5.0L167 2.4L168 2.1L169 13.3L170 6.5L171 3.5L172 15.9L173 7.7L174 4.0L175 4.9L176 2.0L177 3.7L178 2.0L179 2.0L180 2.0L181 2.3L182 3.3L182 27.799999999999955Z" fill="#8aa7d6"/><rect x="0" y="29.0" width="182.8" height="5.2" fill="#8aa7d6"/><path d="M0 68.0L0 37.3L1 37.9L2 35.7L3 46.5L4 39.7L5 36.7L6 35.4L7 36.7L8 35.6L9 35.5L10 35.4L11 35.7L12 41.7L13 37.6L14 35.7L15 40.5L16 37.1L17 37.6L18 36.8L19 35.9L20 35.2L21 51.8L22 42.1L23 37.8L24 36.2L25 35.6L26 36.6L27 35.3L28 35.7L29 35.9L30 36.2L31 54.3L32 48.9L33 41.1L34 37.3L35 35.6L36 37.5L37 36.7L38 36.9L39 38.1L40 44.1L41 38.6L42 36.2L43 37.0L44 35.2L45 37.8L46 40.9L47 37.2L48 35.6L49 36.2L50 35.5L51 35.4L52 35.7L53 38.0L54 52.6L55 42.5L56 53.4L57 47.5L58 40.2L59 37.6L60 36.1L61 45.3L62 42.9L63 38.1L64 36.9L65 35.9L66 35.6L67 40.5L68 37.0L69 35.5L70 35.5L71 35.4L72 36.9L73 47.2L74 40.1L75 36.8L76 36.0L77 37.1L78 37.6L79 36.6L80 37.1L81 37.3L82 35.8L83 35.8L84 35.4L85 35.3L86 36.8L87 35.5L88 36.2L89 35.6L90 35.8L91 37.7L92 35.4L93 35.7L94 35.5L95 36.0L96 38.0L97 40.3L98 37.0L99 36.5L100 35.2L101 49.7L102 41.2L103 37.3L104 35.6L105 50.9L106 41.7L107 43.3L108 38.3L109 36.8L110 37.4L111 36.9L112 35.2L113 51.1L114 41.8L115 37.7L116 36.0L117 35.6L118 35.4L119 36.3L120 37.4L121 43.2L122 38.3L123 49.1L124 43.9L125 38.5L126 37.1L127 35.2L128 36.2L129 35.2L130 37.3L131 45.9L132 54.7L133 48.9L134 40.8L135 37.2L136 52.3L137 42.4L138 52.2L139 42.3L140 38.0L141 37.3L142 35.2L143 36.4L144 49.5L145 41.1L146 37.3L147 37.1L148 35.5L149 36.2L150 44.4L151 38.8L152 36.5L153 35.3L154 51.0L155 41.7L156 37.6L157 35.7L158 36.1L159 35.4L160 53.3L161 42.8L162 38.1L163 36.4L164 35.6L165 35.8L166 38.2L167 35.6L168 35.3L169 46.5L170 39.7L171 36.7L172 49.1L173 40.9L174 37.2L175 38.1L176 35.2L177 36.9L178 35.2L179 35.2L180 35.2L181 35.5L182 36.5L182 68.0Z" fill="#8aa7d6"/><rect x="0" y="27.2" width="182.8" height="1.6" fill="#e3e3e3"/><rect x="0" y="0" width="1.5" height="68.0" fill="#8aa7d6" opacity="0.8"/><rect x="1.5" y="0" width="0.8" height="68.0" fill="rgba(0,0,0,0.3)"/><rect x="2.5" y="17.8" width="8.5" height="10" fill="#4b5a7a"/><rect x="2.5" y="53.0" width="8.5" height="11" fill="#4b5a7a"/><text x="3.6" y="61.8" font-family="Liberation Sans" font-size="9.5" fill="#b7b7b7">R</text></svg>
<svg style="left:538px;top:553.6px" width="21" height="68"><path d="M0 0 L21 0 L21 27 L17 27 Q12 8 0 3z M0 34 L21 34 L21 68 L17 68 Q12 42 0 37z" fill="#53668b"/></svg>
<svg style="left:558.8px;top:553.6px" width="162.7" height="68.0"><rect x="0" y="0" width="162.7" height="68.0" fill="#3f8c63"/><path d="M0 27.799999999999955L0 2.7L1 3.2L2 4.4L3 13.8L4 6.8L5 3.6L6 2.4L7 3.1L8 2.1L9 2.4L10 17.1L11 8.3L12 4.5L13 4.5L14 2.0L15 3.3L16 2.0L17 3.3L18 15.3L19 7.4L20 11.0L21 5.5L22 3.0L23 8.0L24 4.2L25 3.0L26 2.0L27 2.7L28 14.7L29 7.2L30 4.6L31 2.5L32 2.8L33 15.6L34 7.6L35 11.8L36 5.9L37 3.2L38 21.6L39 10.3L40 5.2L41 2.9L42 4.0L43 2.6L44 4.5L45 2.3L46 3.3L47 4.0L48 4.4L49 3.1L50 19.4L51 9.3L52 4.7L53 4.1L54 2.2L55 2.7L56 2.0L57 2.5L58 3.3L59 15.3L60 7.4L61 10.1L62 5.1L63 2.8L64 2.0L65 2.1L66 3.3L67 3.5L68 2.2L69 8.6L70 8.9L71 4.6L72 3.5L73 10.3L74 5.2L75 5.0L76 9.7L77 4.9L78 8.1L79 5.0L80 4.3L81 20.1L82 9.6L83 4.9L84 2.7L85 3.0L86 2.9L87 8.0L88 18.0L89 8.7L90 9.7L91 4.9L92 2.8L93 3.6L94 3.0L95 3.0L96 3.2L97 9.0L98 4.6L99 4.6L100 4.5L101 2.4L102 3.3L103 19.4L104 9.3L105 16.3L106 7.9L107 4.1L108 18.3L109 8.8L110 4.5L111 2.7L112 3.1L113 2.1L114 2.4L115 7.2L116 18.4L117 8.8L118 4.5L119 21.6L120 18.5L121 8.9L122 4.5L123 4.8L124 3.5L125 2.5L126 2.5L127 2.1L128 17.4L129 8.4L130 4.4L131 4.7L132 2.3L133 3.8L134 4.6L135 20.3L136 9.7L137 4.9L138 2.8L139 2.5L140 4.3L141 4.6L142 2.4L143 2.0L144 2.0L145 2.0L146 2.0L147 2.6L148 2.5L149 4.6L150 2.3L151 2.2L152 4.5L153 2.1L154 2.3L155 3.4L156 3.3L157 2.1L158 2.1L159 2.8L160 3.2L161 3.0L162 4.2L162 27.799999999999955Z" fill="#74d6a5"/><rect x="0" y="29.0" width="162.7" height="5.2" fill="#74d6a5"/><path d="M0 68.0L0 35.9L1 36.4L2 37.6L3 47.0L4 40.0L5 36.8L6 35.6L7 36.3L8 35.3L9 35.6L10 50.3L11 41.5L12 37.7L13 37.7L14 35.2L15 36.5L16 35.2L17 36.5L18 48.5L19 40.6L20 44.2L21 38.7L22 36.2L23 41.2L24 37.4L25 36.2L26 35.2L27 35.9L28 47.9L29 40.4L30 37.8L31 35.7L32 36.0L33 48.8L34 40.8L35 45.0L36 39.1L37 36.4L38 54.8L39 43.5L40 38.4L41 36.1L42 37.2L43 35.8L44 37.7L45 35.5L46 36.5L47 37.2L48 37.6L49 36.3L50 52.6L51 42.5L52 37.9L53 37.3L54 35.4L55 35.9L56 35.2L57 35.7L58 36.5L59 48.5L60 40.6L61 43.3L62 38.3L63 36.0L64 35.2L65 35.3L66 36.5L67 36.7L68 35.4L69 41.8L70 42.1L71 37.8L72 36.7L73 43.5L74 38.4L75 38.2L76 42.9L77 38.1L78 41.3L79 38.2L80 37.5L81 53.3L82 42.8L83 38.1L84 35.9L85 36.2L86 36.1L87 41.2L88 51.2L89 41.9L90 42.9L91 38.1L92 36.0L93 36.8L94 36.2L95 36.2L96 36.4L97 42.2L98 37.8L99 37.8L100 37.7L101 35.6L102 36.5L103 52.6L104 42.5L105 49.5L106 41.1L107 37.3L108 51.5L109 42.0L110 37.7L111 35.9L112 36.3L113 35.3L114 35.6L115 40.4L116 51.6L117 42.0L118 37.7L119 54.8L120 51.7L121 42.1L122 37.7L123 38.0L124 36.7L125 35.7L126 35.7L127 35.3L128 50.6L129 41.6L130 37.6L131 37.9L132 35.5L133 37.0L134 37.8L135 53.5L136 42.9L137 38.1L138 36.0L139 35.7L140 37.5L141 37.8L142 35.6L143 35.2L144 35.2L145 35.2L146 35.2L147 35.8L148 35.7L149 37.8L150 35.5L151 35.4L152 37.7L153 35.3L154 35.5L155 36.6L156 36.5L157 35.3L158 35.3L159 36.0L160 36.4L161 36.2L162 37.4L162 68.0Z" fill="#74d6a5"/><rect x="0" y="27.2" width="162.7" height="1.6" fill="#e3e3e3"/><rect x="0" y="0" width="1.5" height="68.0" fill="#74d6a5" opacity="0.8"/><rect x="1.5" y="0" width="0.8" height="68.0" fill="rgba(0,0,0,0.3)"/><rect x="11" y="3" width="12" height="9.5" fill="#8c8c8c" stroke="#bdbdbd" stroke-width="0.8"/><text x="13.3" y="10.8" font-family="Liberation Serif" font-style="italic" font-size="9" fill="#4a4a4a">fx</text><rect x="2.5" y="17.8" width="8.5" height="10" fill="#3a8a5c"/><rect x="2.5" y="53.0" width="8.5" height="11" fill="#3a8a5c"/><text x="3.6" y="61.8" font-family="Liberation Sans" font-size="9.5" fill="#b7b7b7">R</text></svg>
<svg style="left:721.5px;top:553.6px" width="358.5" height="68.0"><rect x="0" y="0" width="358.5" height="68.0" fill="#3f8c63"/><path d="M0 27.799999999999955L0 1.3L1 15.2L2 7.4L3 3.9L4 2.3L5 1.6L6 1.4L7 2.1L8 1.3L9 2.1L10 1.6L11 1.7L12 1.4L13 1.3L14 1.3L15 1.8L16 1.4L17 1.9L18 2.1L19 1.5L20 1.3L21 1.9L22 1.4L23 1.6L24 1.7L25 2.1L26 1.7L27 1.3L28 1.7L29 2.1L30 1.6L31 1.9L32 2.0L33 1.5L34 1.3L35 1.8L36 1.3L37 1.5L38 1.4L39 2.1L40 1.5L41 1.4L42 1.3L43 1.9L44 1.7L45 1.9L46 1.4L47 1.5L48 2.1L49 1.5L50 1.4L51 1.6L52 1.6L53 1.5L54 1.4L55 1.6L56 1.4L57 1.5L58 10.8L59 5.4L60 3.0L61 1.9L62 2.1L63 1.3L64 1.6L65 8.5L66 4.4L67 2.5L68 1.8L69 1.3L70 1.3L71 1.5L72 1.4L73 20.9L74 10.0L75 5.0L76 2.8L77 1.8L78 1.7L79 1.3L80 1.5L81 1.5L82 1.3L83 1.6L84 1.3L85 1.3L86 1.7L87 1.7L88 1.5L89 1.3L90 1.5L91 1.3L92 1.3L93 1.5L94 1.5L95 1.5L96 1.4L97 1.8L98 1.4L99 1.4L100 1.7L101 2.0L102 1.6L103 1.6L104 1.5L105 1.5L106 1.7L107 1.6L108 1.4L109 1.3L110 1.3L111 1.3L112 1.4L113 1.9L114 1.9L115 2.0L116 2.0L117 1.3L118 1.6L119 2.2L120 2.1L121 1.3L122 1.9L123 2.1L124 2.1L125 1.8L126 1.7L127 1.3L128 1.8L129 1.4L130 1.3L131 1.4L132 7.3L133 3.8L134 2.3L135 1.8L136 1.9L137 1.3L138 1.4L139 1.8L140 1.5L141 1.9L142 1.8L143 1.6L144 1.8L145 1.4L146 1.5L147 1.7L148 2.0L149 1.7L150 1.8L151 1.6L152 1.3L153 15.0L154 7.3L155 3.8L156 2.3L157 1.9L158 1.6L159 1.3L160 1.3L161 1.3L162 1.8L163 1.4L164 1.3L165 1.4L166 1.3L167 1.3L168 1.7L169 10.3L170 5.2L171 2.9L172 2.1L173 1.5L174 1.3L175 1.6L176 1.5L177 18.2L178 8.7L179 4.5L180 2.6L181 2.0L182 2.1L183 2.0L184 1.5L185 1.4L186 1.4L187 16.2L188 19.1L189 11.8L190 5.8L191 3.2L192 2.0L193 1.4L194 1.6L195 1.4L196 1.4L197 1.7L198 1.4L199 1.3L200 1.4L201 1.7L202 1.3L203 1.3L204 1.7L205 1.7L206 1.3L207 1.7L208 1.3L209 1.8L210 1.8L211 2.0L212 1.8L213 1.4L214 1.4L215 1.3L216 2.1L217 1.4L218 1.8L219 1.4L220 1.3L221 1.3L222 18.0L223 8.7L224 4.5L225 2.6L226 1.7L227 1.3L228 2.1L229 1.5L230 2.0L231 1.3L232 1.4L233 2.1L234 2.1L235 1.6L236 20.5L237 9.8L238 13.8L239 6.8L240 3.6L241 2.2L242 1.5L243 1.9L244 15.0L245 7.3L246 3.8L247 2.3L248 1.6L249 1.4L250 1.7L251 1.4L252 1.3L253 1.4L254 1.7L255 1.3L256 1.5L257 1.6L258 19.4L259 9.3L260 4.7L261 2.7L262 1.8L263 1.3L264 1.3L265 1.3L266 1.5L267 1.3L268 1.6L269 1.9L270 2.1L271 1.3L272 1.3L273 1.6L274 1.9L275 1.3L276 1.4L277 2.2L278 1.8L279 1.8L280 1.3L281 1.4L282 1.9L283 1.3L284 1.5L285 1.4L286 1.3L287 1.3L288 1.3L289 1.5L290 2.1L291 1.6L292 1.5L293 1.5L294 1.4L295 2.2L296 1.6L297 1.5L298 1.5L299 2.2L300 1.7L301 1.5L302 1.9L303 1.4L304 1.3L305 1.8L306 1.8L307 1.3L308 1.3L309 1.7L310 1.3L311 1.3L312 1.3L313 1.3L314 1.7L315 1.4L316 1.4L317 1.3L318 9.8L319 5.0L320 2.8L321 1.8L322 1.4L323 1.5L324 1.3L325 1.9L326 2.2L327 1.6L328 1.4L329 1.5L330 1.6L331 2.1L332 1.3L333 2.0L334 1.4L335 2.1L336 1.4L337 1.4L338 1.8L339 1.3L340 1.8L341 1.3L342 1.6L343 1.7L344 1.5L345 1.6L346 1.6L347 15.7L348 7.6L349 4.0L350 16.2L351 7.8L352 4.1L353 2.4L354 1.6L355 1.6L356 1.6L357 1.7L358 2.2L358 27.799999999999955Z" fill="#74d6a5"/><rect x="0" y="29.0" width="358.5" height="5.2" fill="#74d6a5"/><path d="M0 68.0L0 34.5L1 48.4L2 40.6L3 37.1L4 35.5L5 34.8L6 34.6L7 35.3L8 34.5L9 35.3L10 34.8L11 34.9L12 34.6L13 34.5L14 34.5L15 35.0L16 34.6L17 35.1L18 35.3L19 34.7L20 34.5L21 35.1L22 34.6L23 34.8L24 34.9L25 35.3L26 34.9L27 34.5L28 34.9L29 35.3L30 34.8L31 35.1L32 35.2L33 34.7L34 34.5L35 35.0L36 34.5L37 34.7L38 34.6L39 35.3L40 34.7L41 34.6L42 34.5L43 35.1L44 34.9L45 35.1L46 34.6L47 34.7L48 35.3L49 34.7L50 34.6L51 34.8L52 34.8L53 34.7L54 34.6L55 34.8L56 34.6L57 34.7L58 44.0L59 38.6L60 36.2L61 35.1L62 35.3L63 34.5L64 34.8L65 41.7L66 37.6L67 35.7L68 35.0L69 34.5L70 34.5L71 34.7L72 34.6L73 54.1L74 43.2L75 38.2L76 36.0L77 35.0L78 34.9L79 34.5L80 34.7L81 34.7L82 34.5L83 34.8L84 34.5L85 34.5L86 34.9L87 34.9L88 34.7L89 34.5L90 34.7L91 34.5L92 34.5L93 34.7L94 34.7L95 34.7L96 34.6L97 35.0L98 34.6L99 34.6L100 34.9L101 35.2L102 34.8L103 34.8L104 34.7L105 34.7L106 34.9L107 34.8L108 34.6L109 34.5L110 34.5L111 34.5L112 34.6L113 35.1L114 35.1L115 35.2L116 35.2L117 34.5L118 34.8L119 35.4L120 35.3L121 34.5L122 35.1L123 35.3L124 35.3L125 35.0L126 34.9L127 34.5L128 35.0L129 34.6L130 34.5L131 34.6L132 40.5L133 37.0L134 35.5L135 35.0L136 35.1L137 34.5L138 34.6L139 35.0L140 34.7L141 35.1L142 35.0L143 34.8L144 35.0L145 34.6L146 34.7L147 34.9L148 35.2L149 34.9L150 35.0L151 34.8L152 34.5L153 48.2L154 40.5L155 37.0L156 35.5L157 35.1L158 34.8L159 34.5L160 34.5L161 34.5L162 35.0L163 34.6L164 34.5L165 34.6L166 34.5L167 34.5L168 34.9L169 43.5L170 38.4L171 36.1L172 35.3L173 34.7L174 34.5L175 34.8L176 34.7L177 51.4L178 41.9L179 37.7L180 35.8L181 35.2L182 35.3L183 35.2L184 34.7L185 34.6L186 34.6L187 49.4L188 52.3L189 45.0L190 39.0L191 36.4L192 35.2L193 34.6L194 34.8L195 34.6L196 34.6L197 34.9L198 34.6L199 34.5L200 34.6L201 34.9L202 34.5L203 34.5L204 34.9L205 34.9L206 34.5L207 34.9L208 34.5L209 35.0L210 35.0L211 35.2L212 35.0L213 34.6L214 34.6L215 34.5L216 35.3L217 34.6L218 35.0L219 34.6L220 34.5L221 34.5L222 51.2L223 41.9L224 37.7L225 35.8L226 34.9L227 34.5L228 35.3L229 34.7L230 35.2L231 34.5L232 34.6L233 35.3L234 35.3L235 34.8L236 53.7L237 43.0L238 47.0L239 40.0L240 36.8L241 35.4L242 34.7L243 35.1L244 48.2L245 40.5L246 37.0L247 35.5L248 34.8L249 34.6L250 34.9L251 34.6L252 34.5L253 34.6L254 34.9L255 34.5L256 34.7L257 34.8L258 52.6L259 42.5L260 37.9L261 35.9L262 35.0L263 34.5L264 34.5L265 34.5L266 34.7L267 34.5L268 34.8L269 35.1L270 35.3L271 34.5L272 34.5L273 34.8L274 35.1L275 34.5L276 34.6L277 35.4L278 35.0L279 35.0L280 34.5L281 34.6L282 35.1L283 34.5L284 34.7L285 34.6L286 34.5L287 34.5L288 34.5L289 34.7L290 35.3L291 34.8L292 34.7L293 34.7L294 34.6L295 35.4L296 34.8L297 34.7L298 34.7L299 35.4L300 34.9L301 34.7L302 35.1L303 34.6L304 34.5L305 35.0L306 35.0L307 34.5L308 34.5L309 34.9L310 34.5L311 34.5L312 34.5L313 34.5L314 34.9L315 34.6L316 34.6L317 34.5L318 43.0L319 38.2L320 36.0L321 35.0L322 34.6L323 34.7L324 34.5L325 35.1L326 35.4L327 34.8L328 34.6L329 34.7L330 34.8L331 35.3L332 34.5L333 35.2L334 34.6L335 35.3L336 34.6L337 34.6L338 35.0L339 34.5L340 35.0L341 34.5L342 34.8L343 34.9L344 34.7L345 34.8L346 34.8L347 48.9L348 40.8L349 37.2L350 49.4L351 41.0L352 37.3L353 35.6L354 34.8L355 34.8L356 34.8L357 34.9L358 35.4L358 68.0Z" fill="#74d6a5"/><rect x="0" y="27.2" width="358.5" height="1.6" fill="#e3e3e3"/><rect x="0" y="0" width="1.5" height="68.0" fill="#74d6a5" opacity="0.8"/><rect x="1.5" y="0" width="0.8" height="68.0" fill="rgba(0,0,0,0.3)"/><rect x="11" y="3" width="12" height="9.5" fill="#8c8c8c" stroke="#bdbdbd" stroke-width="0.8"/><text x="13.3" y="10.8" font-family="Liberation Serif" font-style="italic" font-size="9" fill="#4a4a4a">fx</text><rect x="2.5" y="17.8" width="8.5" height="10" fill="#3a8a5c"/><rect x="2.5" y="53.0" width="8.5" height="11" fill="#3a8a5c"/><text x="3.6" y="61.8" font-family="Liberation Sans" font-size="9.5" fill="#b7b7b7">R</text></svg>
<svg style="left:397.2px;top:622.6px" width="40.4" height="44.39999999999998"><rect width="40.4" height="44.39999999999998" fill="#3d7c59"/><path d="M0 26.8L0 26.5L1 22.7L2 21.3L3 18.4L4 20.5L5 16.6L6 18.9L7 14.1L8 16.9L9 14.8L10 18.1L11 15.0L12 15.2L13 18.7L14 16.1L15 19.1L16 15.9L17 20.8L18 20.4L19 20.4L20 18.9L21 20.0L22 21.3L23 20.8L24 21.8L25 21.5L26 21.9L27 19.9L28 22.2L29 22.6L30 21.6L31 22.6L32 23.0L33 20.0L34 22.0L35 22.5L36 22.3L37 23.1L38 20.7L39 22.4L40 23.0L40 26.8Z" fill="#6fd19f"/><rect x="0" y="28" width="40.4" height="5.2" fill="#6fd19f"/><path d="M0 44.39999999999998 L0 36.39999999999998 L3 34.39999999999998 L6 42.39999999999998 L9 44.39999999999998z" fill="#6fd19f"/><rect x="0" y="26.2" width="40.4" height="1.6" fill="#e0e0e0"/><rect x="0" y="0" width="1.3" height="44.39999999999998" fill="#8fd8b2" opacity="0.7"/><rect x="11" y="2.3" width="12.5" height="10" fill="#7f7f7f" stroke="#b9b9b9" stroke-width="0.9"/><text x="13.6" y="10.5" font-family="Liberation Serif" font-style="italic" font-size="9" fill="#444">fx</text><rect x="2" y="17.5" width="8.5" height="10" fill="#2b5a40"/><path d="M0 0 h5 l-5 4z" fill="#d8d8d8"/></svg>
<svg style="left:470.6px;top:622.6px" width="5.7" height="44.39999999999998"><rect width="5.7" height="44.39999999999998" fill="#3d7c59"/><path d="M0 26.8L0 26.5L1 18.9L2 9.7L3 4.6L4 9.6L5 12.4L5 26.8Z" fill="#6fd19f"/><rect x="0" y="28" width="5.7" height="5.2" fill="#6fd19f"/><path d="M0 44.39999999999998 L0 36.39999999999998 L3 34.39999999999998 L6 42.39999999999998 L9 44.39999999999998z" fill="#6fd19f"/><rect x="0" y="26.2" width="5.7" height="1.6" fill="#e0e0e0"/><rect x="0" y="0" width="1.3" height="44.39999999999998" fill="#8fd8b2" opacity="0.7"/></svg>
<svg style="left:516.5px;top:622.6px" width="34.5" height="44.39999999999998"><rect width="34.5" height="44.39999999999998" fill="#3d7c59"/><path d="M0 26.8L0 26.3L1 16.0L2 11.6L3 10.1L4 10.2L5 7.4L6 9.4L7 12.9L8 14.6L9 13.6L10 13.1L11 15.2L12 17.4L13 18.3L14 19.3L15 18.6L16 20.4L17 20.2L18 20.1L19 21.9L20 22.0L21 22.7L22 23.1L23 21.9L24 24.1L25 23.3L26 24.7L27 24.1L28 24.6L29 24.7L30 25.0L31 24.4L32 24.9L33 24.8L34 24.8L34 26.8Z" fill="#6fd19f"/><rect x="0" y="28" width="34.5" height="5.2" fill="#6fd19f"/><path d="M0 44.39999999999998 L0 36.39999999999998 L3 34.39999999999998 L6 42.39999999999998 L9 44.39999999999998z" fill="#6fd19f"/><rect x="0" y="26.2" width="34.5" height="1.6" fill="#e0e0e0"/><rect x="0" y="0" width="1.3" height="44.39999999999998" fill="#8fd8b2" opacity="0.7"/><rect x="11" y="2.3" width="12.5" height="10" fill="#7f7f7f" stroke="#b9b9b9" stroke-width="0.9"/><text x="13.6" y="10.5" font-family="Liberation Serif" font-style="italic" font-size="9" fill="#444">fx</text><rect x="2" y="17.5" width="8.5" height="10" fill="#2b5a40"/><path d="M0 0 h5 l-5 4z" fill="#d8d8d8"/></svg>
<svg style="left:719.4px;top:622.6px" width="48.0" height="44.39999999999998"><rect width="48.0" height="44.39999999999998" fill="#3d7c59"/><path d="M0 26.8L0 26.5L1 25.5L2 25.1L3 24.2L4 23.9L5 24.0L6 23.8L7 23.4L8 23.7L9 22.3L10 21.9L11 22.3L12 20.7L13 23.1L14 20.6L15 23.2L16 22.0L17 22.2L18 20.6L19 20.0L20 22.8L21 20.1L22 22.2L23 20.4L24 21.4L25 21.3L26 22.2L27 21.8L28 21.9L29 22.9L30 23.9L31 22.3L32 24.0L33 22.9L34 23.6L35 23.6L36 23.5L37 23.0L38 23.8L39 23.8L40 23.6L41 24.6L42 24.1L43 24.6L44 24.1L45 25.3L46 24.7L47 24.7L48 24.8L48 26.8Z" fill="#6fd19f"/><rect x="0" y="28" width="48.0" height="5.2" fill="#6fd19f"/><path d="M0 44.39999999999998 L0 36.39999999999998 L3 34.39999999999998 L6 42.39999999999998 L9 44.39999999999998z" fill="#6fd19f"/><rect x="0" y="26.2" width="48.0" height="1.6" fill="#e0e0e0"/><rect x="0" y="0" width="1.3" height="44.39999999999998" fill="#8fd8b2" opacity="0.7"/><rect x="11" y="2.3" width="12.5" height="10" fill="#7f7f7f" stroke="#b9b9b9" stroke-width="0.9"/><text x="13.6" y="10.5" font-family="Liberation Serif" font-style="italic" font-size="9" fill="#444">fx</text><rect x="2" y="17.5" width="8.5" height="10" fill="#2b5a40"/><path d="M0 0 h5 l-5 4z" fill="#d8d8d8"/></svg>
<svg style="left:771.9px;top:622.6px" width="74.8" height="44.39999999999998"><rect width="74.8" height="44.39999999999998" fill="#3d7c59"/><path d="M0 26.8L0 26.5L1 24.6L2 22.5L3 21.1L4 21.4L5 20.7L6 19.1L7 20.2L8 20.9L9 17.1L10 19.0L11 20.0L12 19.8L13 16.5L14 15.8L15 19.4L16 14.4L17 19.0L18 18.9L19 12.9L20 16.1L21 17.2L22 13.2L23 18.1L24 17.1L25 16.9L26 21.5L27 19.6L28 22.3L29 21.7L30 22.4L31 23.9L32 23.8L33 24.7L34 25.2L35 24.9L36 25.1L37 25.1L38 25.3L39 25.7L40 25.9L41 26.0L42 26.2L43 26.3L44 26.3L45 26.5L46 26.0L47 26.5L48 26.1L49 26.5L50 25.9L51 25.9L52 26.2L53 26.2L54 26.4L55 26.3L56 26.4L57 26.5L58 26.2L59 26.3L60 26.2L61 26.5L62 26.3L63 26.2L64 26.4L65 26.5L66 26.2L67 26.3L68 26.1L69 26.3L70 26.4L71 26.5L72 26.0L73 26.5L74 26.2L74 26.8Z" fill="#6fd19f"/><rect x="0" y="28" width="74.8" height="5.2" fill="#6fd19f"/><path d="M0 44.39999999999998 L0 36.39999999999998 L3 34.39999999999998 L6 42.39999999999998 L9 44.39999999999998z" fill="#6fd19f"/><rect x="0" y="26.2" width="74.8" height="1.6" fill="#e0e0e0"/><rect x="0" y="0" width="1.3" height="44.39999999999998" fill="#8fd8b2" opacity="0.7"/><rect x="11" y="2.3" width="12.5" height="10" fill="#7f7f7f" stroke="#b9b9b9" stroke-width="0.9"/><text x="13.6" y="10.5" font-family="Liberation Serif" font-style="italic" font-size="9" fill="#444">fx</text><rect x="2" y="17.5" width="8.5" height="10" fill="#2b5a40"/><path d="M0 0 h5 l-5 4z" fill="#d8d8d8"/></svg>
<svg style="left:996.7px;top:622.6px" width="29.1" height="44.39999999999998"><rect width="29.1" height="44.39999999999998" fill="#3d7c59"/><path d="M0 26.8L0 26.5L1 16.9L2 11.6L3 13.2L4 10.4L5 6.3L6 10.1L7 13.5L8 17.0L9 15.2L10 18.8L11 20.6L12 19.5L13 21.0L14 21.5L15 22.0L16 21.0L17 23.7L18 24.0L19 24.3L20 24.1L21 24.4L22 24.5L23 24.3L24 24.8L25 25.3L26 24.5L27 25.8L28 25.0L29 25.2L29 26.8Z" fill="#6fd19f"/><rect x="0" y="28" width="29.1" height="5.2" fill="#6fd19f"/><path d="M0 44.39999999999998 L0 36.39999999999998 L3 34.39999999999998 L6 42.39999999999998 L9 44.39999999999998z" fill="#6fd19f"/><rect x="0" y="26.2" width="29.1" height="1.6" fill="#e0e0e0"/><rect x="0" y="0" width="1.3" height="44.39999999999998" fill="#8fd8b2" opacity="0.7"/></svg>
<div style="left:375px;top:217px;width:1.5px;height:450px;background:#4a7fc2;"></div>
<div style="left:283.5px;top:217.7px;width:218.5px;height:408px;background:#1e1e1e;border:1px solid #2e2e2e;box-sizing:border-box"></div>
<div style="left:284.5px;top:307.5px;width:216.5px;height:19.6px;background:#4d4d4d;"></div>
<span class="t" style="left:305.5px;top:221.95px;font-size:11.4px;line-height:11.4px;color:#cdcdcd;font-weight:400;">Show Source Clip Name and Label</span>
<div style="left:288px;top:239.6px;width:208px;height:1px;background:#2d2d2d;"></div>
<span class="t" style="left:305.5px;top:247.15px;font-size:11.4px;line-height:11.4px;color:#5c9de6;font-weight:400;">Show Video Thumbnails</span>
<svg style="left:287px;top:248.1px;" width="13" height="9" viewBox="0 0 13 9"><path d="M1.2 4.5 L4.6 7.6 L11.6 1.2" fill="none" stroke="#c9c9c9" stroke-width="1.7"/></svg>
<span class="t" style="left:305.5px;top:267.25px;font-size:11.4px;line-height:11.4px;color:#cdcdcd;font-weight:400;">Show Video Keyframes</span>
<span class="t" style="left:305.5px;top:287.35px;font-size:11.4px;line-height:11.4px;color:#5c9de6;font-weight:400;">Show Video Names</span>
<svg style="left:287px;top:288.29999999999995px;" width="13" height="9" viewBox="0 0 13 9"><path d="M1.2 4.5 L4.6 7.6 L11.6 1.2" fill="none" stroke="#c9c9c9" stroke-width="1.7"/></svg>
<div style="left:288px;top:304.2px;width:208px;height:1px;background:#2d2d2d;"></div>
<span class="t" style="left:305.5px;top:311.85px;font-size:11.4px;line-height:11.4px;color:#5c9de6;font-weight:400;">Show Audio Waveform</span>
<svg style="left:287px;top:312.79999999999995px;" width="13" height="9" viewBox="0 0 13 9"><path d="M1.2 4.5 L4.6 7.6 L11.6 1.2" fill="none" stroke="#c9c9c9" stroke-width="1.7"/></svg>
<span class="t" style="left:305.5px;top:332.05px;font-size:11.4px;line-height:11.4px;color:#5c9de6;font-weight:400;">Show Audio Keyframes</span>
<svg style="left:287px;top:333.0px;" width="13" height="9" viewBox="0 0 13 9"><path d="M1.2 4.5 L4.6 7.6 L11.6 1.2" fill="none" stroke="#c9c9c9" stroke-width="1.7"/></svg>
<span class="t" style="left:305.5px;top:352.25px;font-size:11.4px;line-height:11.4px;color:#cdcdcd;font-weight:400;">Show Audio Names</span>
<div style="left:288px;top:368.5px;width:208px;height:1px;background:#2d2d2d;"></div>
<span class="t" style="left:305.5px;top:376.95px;font-size:11.4px;line-height:11.4px;color:#5c9de6;font-weight:400;">Show Clip Markers</span>
<svg style="left:287px;top:377.9px;" width="13" height="9" viewBox="0 0 13 9"><path d="M1.2 4.5 L4.6 7.6 L11.6 1.2" fill="none" stroke="#c9c9c9" stroke-width="1.7"/></svg>
<span class="t" style="left:305.5px;top:397.05px;font-size:11.4px;line-height:11.4px;color:#cdcdcd;font-weight:400;">Show Duplicate Frame Markers</span>
<span class="t" style="left:305.5px;top:417.15px;font-size:11.4px;line-height:11.4px;color:#cdcdcd;font-weight:400;">Show Through Edits</span>
<span class="t" style="left:305.5px;top:437.25px;font-size:11.4px;line-height:11.4px;color:#5c9de6;font-weight:400;">Show FX Badges</span>
<svg style="left:287px;top:438.2px;" width="13" height="9" viewBox="0 0 13 9"><path d="M1.2 4.5 L4.6 7.6 L11.6 1.2" fill="none" stroke="#c9c9c9" stroke-width="1.7"/></svg>
<span class="t" style="left:305.5px;top:457.35px;font-size:11.4px;line-height:11.4px;color:#5c9de6;font-weight:400;">Show Proxy Badges</span>
<svg style="left:287px;top:458.29999999999995px;" width="13" height="9" viewBox="0 0 13 9"><path d="M1.2 4.5 L4.6 7.6 L11.6 1.2" fill="none" stroke="#c9c9c9" stroke-width="1.7"/></svg>
<div style="left:288px;top:474.2px;width:208px;height:1px;background:#2d2d2d;"></div>
<span class="t" style="left:305.5px;top:481.85px;font-size:11.4px;line-height:11.4px;color:#5c9de6;font-weight:400;">Composite Preview During Trim</span>
<svg style="left:287px;top:482.79999999999995px;" width="13" height="9" viewBox="0 0 13 9"><path d="M1.2 4.5 L4.6 7.6 L11.6 1.2" fill="none" stroke="#c9c9c9" stroke-width="1.7"/></svg>
<div style="left:288px;top:498.8px;width:208px;height:1px;background:#2d2d2d;"></div>
<span class="t" style="left:305.5px;top:506.45px;font-size:11.4px;line-height:11.4px;color:#cdcdcd;font-weight:400;">Minimize All Tracks</span>
<span class="t" style="left:305.5px;top:526.55px;font-size:11.4px;line-height:11.4px;color:#cdcdcd;font-weight:400;">Expand All Tracks</span>
<span class="t" style="left:305.5px;top:546.65px;font-size:11.4px;line-height:11.4px;color:#cdcdcd;font-weight:400;">Save Preset<span style="letter-spacing:-0.9px">...</span></span>
<span class="t" style="left:305.5px;top:566.75px;font-size:11.4px;line-height:11.4px;color:#cdcdcd;font-weight:400;">Manage Presets<span style="letter-spacing:-0.9px">...</span></span>
<div style="left:288px;top:583.8px;width:208px;height:1px;background:#2d2d2d;"></div>
<span class="t" style="left:305.5px;top:591.25px;font-size:11.4px;line-height:11.4px;color:#cdcdcd;font-weight:400;">Customize Video Header<span style="letter-spacing:-0.9px">...</span></span>
<span class="t" style="left:305.5px;top:611.35px;font-size:11.4px;line-height:11.4px;color:#cdcdcd;font-weight:400;">Customize Audio Header<span style="letter-spacing:-0.9px">...</span></span>
<svg style="left:413px;top:323px;" width="17" height="20" viewBox="0 0 17 20"><path d="M3 2.5 L3 14 L5.8 11.8 L8.3 17 L10.6 16 L8.2 11 L13.6 11 z" fill="#0a0a0a" stroke="#e6e6e6" stroke-width="1.2"/></svg>
</div></body></html>
